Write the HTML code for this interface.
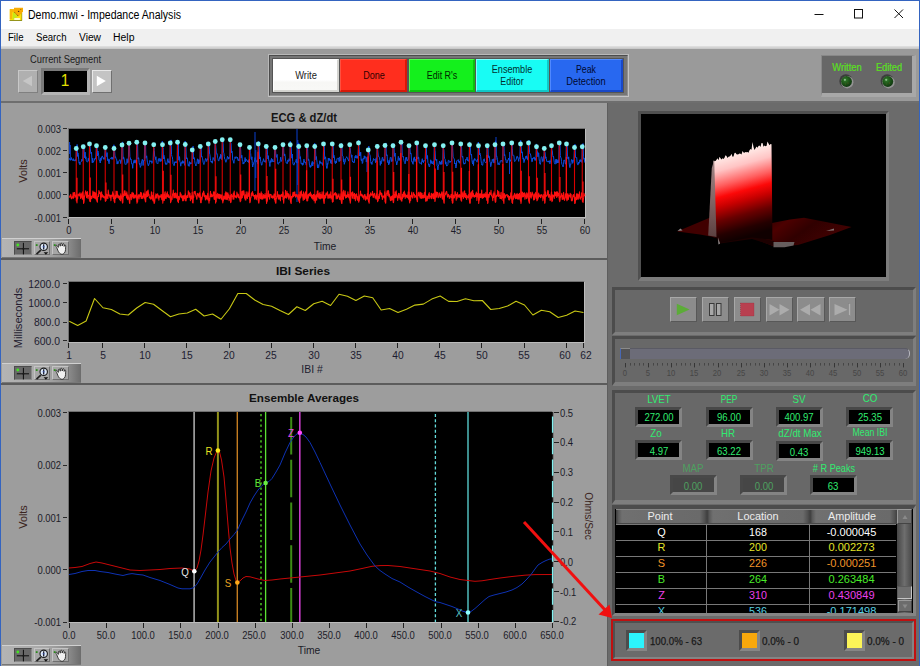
<!DOCTYPE html><html><head><meta charset="utf-8"><style>
*{box-sizing:border-box;margin:0;padding:0}
html,body{width:920px;height:666px;overflow:hidden;background:#9a9a9a;font-family:"Liberation Sans",sans-serif;}
div{position:absolute}
.t{white-space:nowrap}
svg{position:absolute;left:0;top:0}
.btn{font-size:10px;color:#111;text-align:center;}
</style></head><body>
<div class="" style="left:0px;top:0px;width:920px;height:29px;background:#fff"></div>
<div class="" style="left:0px;top:29px;width:920px;height:17px;background:#f0f0f0"></div>
<div class="" style="left:0px;top:46px;width:920px;height:2.5px;background:linear-gradient(180deg,#e2e2e2,#c4c4c4)"></div>
<div class="" style="left:0px;top:48.5px;width:920px;height:52.5px;background:#9a9a9a"></div>
<div class="t" style="left:28px;top:5px;height:20px;line-height:20px;font-size:12px;color:#000;font-weight:normal;transform:scaleX(0.879);transform-origin:left center;">Demo.mwi - Impedance Analysis</div>
<div class="t" style="left:7.5px;top:26.799999999999997px;height:20px;line-height:20px;font-size:11.7px;color:#000;font-weight:normal;transform:scaleX(0.822);transform-origin:left center;">File</div>
<div class="t" style="left:35.5px;top:26.799999999999997px;height:20px;line-height:20px;font-size:11.7px;color:#000;font-weight:normal;transform:scaleX(0.823);transform-origin:left center;">Search</div>
<div class="t" style="left:78.5px;top:26.799999999999997px;height:20px;line-height:20px;font-size:11.7px;color:#000;font-weight:normal;transform:scaleX(0.875);transform-origin:left center;">View</div>
<div class="t" style="left:113px;top:26.799999999999997px;height:20px;line-height:20px;font-size:11.7px;color:#000;font-weight:normal;transform:scaleX(0.894);transform-origin:left center;">Help</div>
<svg width="920" height="30"><g stroke="#111" stroke-width="1" fill="none"><path d="M814.5,14.5h9"/><rect x="854.5" y="9.5" width="8" height="8.5"/><path d="M894.5,9.5l8.5,8.5M903,9.5l-8.5,8.5"/></g><rect x="9.8" y="9.2" width="12.2" height="11.3" fill="#ffe208"/><rect x="9.8" y="9.2" width="2.4" height="10" fill="#f8b808"/><path d="M9.5,20h12.5v0.9h-12.5z" fill="#8a8a10"/><path d="M21.4,13v7.5h0.8v-7.5z" fill="#a0a018"/><path d="M13,11.5l5,5 -5.5,3.5z" fill="#c8e818"/><rect x="14.3" y="18.2" width="5.6" height="1.6" fill="#fffff0"/><path d="M14,7.8h9v4l-4.6,4.6 -4.4,-4.4z" fill="#f8ac04"/><path d="M10,9.2h4v3h-4z" fill="#f8b808"/><path d="M14.6,12.4l3.4,3.4" stroke="#70380c" stroke-width="1" stroke-dasharray="1,0.9"/><circle cx="18.6" cy="11.4" r="0.7" fill="#5a3010"/><circle cx="20.8" cy="9.6" r="0.5" fill="#805018"/></svg>
<div class="t" style="left:30px;top:48.6px;height:20px;line-height:20px;font-size:11px;color:#1a1a1a;font-weight:normal;transform:scaleX(0.848);transform-origin:left center;">Current Segment</div>
<div class="" style="left:18px;top:70px;width:20px;height:23px;background:#b0b0b0;border:1px solid;border-color:#c8c8c8 #808080 #808080 #c8c8c8"></div>
<div class="" style="left:92px;top:70px;width:20px;height:23px;background:#c4c4c4;border:1px solid;border-color:#e8e8e8 #707070 #707070 #e8e8e8"></div>
<div class="" style="left:41px;top:68px;width:49px;height:27px;background:#000;border:3px solid;border-color:#7a7a7a #b4b4b4 #b4b4b4 #7a7a7a"></div>
<div class="t" style="left:-85.5px;top:71.3px;width:300px;height:20px;line-height:20px;text-align:center;font-size:17px;color:#e6e000;font-weight:normal;transform:scaleX(0.900);transform-origin:center center;">1</div>
<svg width="920" height="110"><path d="M22.8,81l9.2,-5.2v10.4z" fill="#c6c6c6"/><path d="M105.8,81l-9,-5.2v10.4z" fill="#fff"/></svg>
<div class="" style="left:267.5px;top:54px;width:361px;height:43px;background:#767676;border:1px solid;border-color:#b8b8b8 #c4c4c4 #c4c4c4 #b8b8b8"></div>
<div class="" style="left:268.5px;top:55px;width:359px;height:41px;border:1px solid;border-color:#4c4c4c #909090 #909090 #4c4c4c"></div>
<div class="" style="left:272px;top:58px;width:352px;height:34.5px;background:#555"></div>
<div class="" style="left:272.8px;top:58.8px;width:66px;height:32.8px;background:linear-gradient(180deg,#fff 0,#fff 66%,#f7f7f5 74%,#f8f8f6 100%);border:solid;border-width:1px 2px 2px 1px;border-color:#ffffff #d4d4d0 #d4d4d0 #ffffff;"></div>
<div class="t" style="left:156.3px;top:65.6px;width:300px;height:20px;line-height:20px;text-align:center;font-size:10px;color:#222;font-weight:normal;transform:scaleX(0.937);transform-origin:center center;">Write</div>
<div class="" style="left:340.3px;top:58.8px;width:66.5px;height:32.8px;background:#ff2e1e;border:solid;border-width:1px 2px 2px 1px;border-color:#ff5040 #d81808 #d81808 #ff5040;"></div>
<div class="t" style="left:224.05px;top:65.6px;width:300px;height:20px;line-height:20px;text-align:center;font-size:10px;color:#300000;font-weight:normal;transform:scaleX(0.908);transform-origin:center center;">Done</div>
<div class="" style="left:408.5px;top:58.8px;width:66px;height:32.8px;background:#14f01c;border:solid;border-width:1px 2px 2px 1px;border-color:#50ff50 #0cc010 #0cc010 #50ff50;"></div>
<div class="t" style="left:292.0px;top:65.6px;width:300px;height:20px;line-height:20px;text-align:center;font-size:10px;color:#002800;font-weight:normal;transform:scaleX(0.893);transform-origin:center center;">Edit R's</div>
<div class="" style="left:476px;top:58.8px;width:72.5px;height:32.8px;background:#18fcf4;border:solid;border-width:1px 2px 2px 1px;border-color:#80ffff #10c8c8 #10c8c8 #80ffff;"></div>
<div class="t" style="left:362.25px;top:59.8px;width:300px;height:20px;line-height:20px;text-align:center;font-size:10px;color:#003030;font-weight:normal;transform:scaleX(0.911);transform-origin:center center;">Ensemble</div>
<div class="t" style="left:362.25px;top:71.8px;width:300px;height:20px;line-height:20px;text-align:center;font-size:10px;color:#003030;font-weight:normal;transform:scaleX(0.890);transform-origin:center center;">Editor</div>
<div class="" style="left:550px;top:58.8px;width:72.5px;height:32.8px;background:#2868f0;border:solid;border-width:1px 2px 2px 1px;border-color:#5088ff #1848c8 #1848c8 #5088ff;"></div>
<div class="t" style="left:436.25px;top:59.8px;width:300px;height:20px;line-height:20px;text-align:center;font-size:10px;color:#000830;font-weight:normal;transform:scaleX(0.877);transform-origin:center center;">Peak</div>
<div class="t" style="left:436.25px;top:71.8px;width:300px;height:20px;line-height:20px;text-align:center;font-size:10px;color:#000830;font-weight:normal;transform:scaleX(0.929);transform-origin:center center;">Detection</div>
<div class="" style="left:820.6px;top:54.6px;width:95.4px;height:42.4px;background:#676767;border:solid;border-width:1.3px 4.2px 4px 1.3px;border-color:#888 #a8a8a8 #a8a8a8 #888"></div>
<div class="t" style="left:696.8px;top:57.900000000000006px;width:300px;height:20px;line-height:20px;text-align:center;font-size:10px;color:#5ae020;font-weight:normal;-webkit-text-stroke:0.2px #5ae020;transform:scaleX(0.937);transform-origin:center center;">Written</div>
<div class="t" style="left:739px;top:57.900000000000006px;width:300px;height:20px;line-height:20px;text-align:center;font-size:10px;color:#5ae020;font-weight:normal;-webkit-text-stroke:0.2px #5ae020;transform:scaleX(0.917);transform-origin:center center;">Edited</div>
<svg width="920" height="110"><defs><radialGradient id="led" cx="38%" cy="35%" r="70%"><stop offset="0" stop-color="#347c2c"/><stop offset="0.55" stop-color="#1c5418"/><stop offset="1" stop-color="#103410"/></radialGradient></defs><circle cx="845.9" cy="80.9" r="6.6" fill="#3c3c3c"/><circle cx="847.2" cy="82.2" r="6.2" fill="#949494"/><circle cx="846.5" cy="81.5" r="5.4" fill="url(#led)"/><circle cx="844.9" cy="79.8" r="1.1" fill="#98c898" opacity="0.85"/><circle cx="848.0" cy="83" r="0.5" fill="#8c5020" opacity="0.8"/><circle cx="845.5" cy="84" r="0.45" fill="#8c7020" opacity="0.7"/><circle cx="887.1999999999999" cy="80.9" r="6.6" fill="#3c3c3c"/><circle cx="888.5" cy="82.2" r="6.2" fill="#949494"/><circle cx="887.8" cy="81.5" r="5.4" fill="url(#led)"/><circle cx="886.1999999999999" cy="79.8" r="1.1" fill="#98c898" opacity="0.85"/><circle cx="889.3" cy="83" r="0.5" fill="#8c5020" opacity="0.8"/><circle cx="886.8" cy="84" r="0.45" fill="#8c7020" opacity="0.7"/></svg>
<div class="" style="left:0px;top:101px;width:920px;height:2px;background:#6e6e6e"></div>
<div class="" style="left:1px;top:103px;width:606px;height:563px;background:#9d9d9d"></div>
<div class="" style="left:607px;top:103px;width:1.5px;height:563px;background:#5e5e5e"></div>
<div class="" style="left:608px;top:103px;width:312px;height:563px;background:#6b6b6b"></div>
<div class="" style="left:1px;top:258.2px;width:606px;height:1.5px;background:#5c5c5c"></div>
<div class="" style="left:1px;top:383.1px;width:606px;height:1.5px;background:#5c5c5c"></div>
<div class="" style="left:2px;top:238px;width:79px;height:20px;background:linear-gradient(90deg,#b4b4b4 0,#a8a8a8 55%,#8a8a8a 85%,#6c6c6c 100%);border-top:1px solid #d0d0d0;border-bottom:1px solid #787878"></div>
<div class="" style="left:14px;top:241.3px;width:18px;height:14px;background:#686868;border:1px solid;border-color:#4c4c4c #8a8a8a #8a8a8a #4c4c4c"></div>
<div class="" style="left:34px;top:241.3px;width:16px;height:14px;background:#a6a6a6;border:1px solid;border-color:#c4c4c4 #707070 #707070 #c4c4c4"></div>
<div class="" style="left:51.7px;top:241.3px;width:17px;height:14px;background:#a6a6a6;border:1px solid;border-color:#c4c4c4 #707070 #707070 #c4c4c4"></div>
<svg width="100" height="20" style="left:0;top:238px"><g fill="none"><path d="M23.4,4.8v11.6M16.8,10.8h12.2" stroke="#0c0c0c" stroke-width="1"/><circle cx="23.4" cy="10.8" r="1" fill="#1a1a1a"/><circle cx="17.8" cy="7" r="1.4" fill="#44e424"/><circle cx="43.7" cy="8.8" r="3.7" stroke="#1a1a1a" stroke-width="1.1" fill="#dce8f8"/><path d="M43.7,6.2v5.2" stroke="#101018" stroke-width="1.2"/><path d="M42.5,8.8h2.4" stroke="#4060c0" stroke-width="0.8"/><path d="M40.8,12.2l-4.3,4" stroke="#222" stroke-width="1.7"/><path d="M43.6,14.3h4.6l-2.3,2.5z" fill="#111"/><rect x="35.8" y="6.2" width="1.8" height="1.8" fill="#2c8c1c"/><path d="M57.3,11c-0.8,-2.4 -2,-3 -1.4,-3.6 c0.8,-0.5 1.6,0.6 2.4,2 c-0.2,-4.2 1.6,-4.6 1.9,-1.2 c0,-4 2,-4 2,-0.2 c0.4,-3.4 2.2,-3 1.9,0.4 c0.7,-2.4 1.9,-1.6 1.5,0.8 c0.2,3.6 -0.6,6 -2.6,7 c-2.6,0.5 -4.4,-1.4 -5.7,-5.2z" fill="#f0f0f0" stroke="#141414" stroke-width="0.8"/><rect x="53.8" y="6.2" width="1.8" height="1.8" fill="#2c8c1c"/></g></svg>
<div class="" style="left:2px;top:363px;width:79px;height:20px;background:linear-gradient(90deg,#b4b4b4 0,#a8a8a8 55%,#8a8a8a 85%,#6c6c6c 100%);border-top:1px solid #d0d0d0;border-bottom:1px solid #787878"></div>
<div class="" style="left:14px;top:366.3px;width:18px;height:14px;background:#686868;border:1px solid;border-color:#4c4c4c #8a8a8a #8a8a8a #4c4c4c"></div>
<div class="" style="left:34px;top:366.3px;width:16px;height:14px;background:#a6a6a6;border:1px solid;border-color:#c4c4c4 #707070 #707070 #c4c4c4"></div>
<div class="" style="left:51.7px;top:366.3px;width:17px;height:14px;background:#a6a6a6;border:1px solid;border-color:#c4c4c4 #707070 #707070 #c4c4c4"></div>
<svg width="100" height="20" style="left:0;top:363px"><g fill="none"><path d="M23.4,4.8v11.6M16.8,10.8h12.2" stroke="#0c0c0c" stroke-width="1"/><circle cx="23.4" cy="10.8" r="1" fill="#1a1a1a"/><circle cx="17.8" cy="7" r="1.4" fill="#44e424"/><circle cx="43.7" cy="8.8" r="3.7" stroke="#1a1a1a" stroke-width="1.1" fill="#dce8f8"/><path d="M43.7,6.2v5.2" stroke="#101018" stroke-width="1.2"/><path d="M42.5,8.8h2.4" stroke="#4060c0" stroke-width="0.8"/><path d="M40.8,12.2l-4.3,4" stroke="#222" stroke-width="1.7"/><path d="M43.6,14.3h4.6l-2.3,2.5z" fill="#111"/><rect x="35.8" y="6.2" width="1.8" height="1.8" fill="#2c8c1c"/><path d="M57.3,11c-0.8,-2.4 -2,-3 -1.4,-3.6 c0.8,-0.5 1.6,0.6 2.4,2 c-0.2,-4.2 1.6,-4.6 1.9,-1.2 c0,-4 2,-4 2,-0.2 c0.4,-3.4 2.2,-3 1.9,0.4 c0.7,-2.4 1.9,-1.6 1.5,0.8 c0.2,3.6 -0.6,6 -2.6,7 c-2.6,0.5 -4.4,-1.4 -5.7,-5.2z" fill="#f0f0f0" stroke="#141414" stroke-width="0.8"/><rect x="53.8" y="6.2" width="1.8" height="1.8" fill="#2c8c1c"/></g></svg>
<div class="" style="left:2px;top:644.6px;width:79px;height:20px;background:linear-gradient(90deg,#b4b4b4 0,#a8a8a8 55%,#8a8a8a 85%,#6c6c6c 100%);border-top:1px solid #d0d0d0;border-bottom:1px solid #787878"></div>
<div class="" style="left:14px;top:647.9px;width:18px;height:14px;background:#686868;border:1px solid;border-color:#4c4c4c #8a8a8a #8a8a8a #4c4c4c"></div>
<div class="" style="left:34px;top:647.9px;width:16px;height:14px;background:#a6a6a6;border:1px solid;border-color:#c4c4c4 #707070 #707070 #c4c4c4"></div>
<div class="" style="left:51.7px;top:647.9px;width:17px;height:14px;background:#a6a6a6;border:1px solid;border-color:#c4c4c4 #707070 #707070 #c4c4c4"></div>
<svg width="100" height="20" style="left:0;top:644.6px"><g fill="none"><path d="M23.4,4.8v11.6M16.8,10.8h12.2" stroke="#0c0c0c" stroke-width="1"/><circle cx="23.4" cy="10.8" r="1" fill="#1a1a1a"/><circle cx="17.8" cy="7" r="1.4" fill="#44e424"/><circle cx="43.7" cy="8.8" r="3.7" stroke="#1a1a1a" stroke-width="1.1" fill="#dce8f8"/><path d="M43.7,6.2v5.2" stroke="#101018" stroke-width="1.2"/><path d="M42.5,8.8h2.4" stroke="#4060c0" stroke-width="0.8"/><path d="M40.8,12.2l-4.3,4" stroke="#222" stroke-width="1.7"/><path d="M43.6,14.3h4.6l-2.3,2.5z" fill="#111"/><rect x="35.8" y="6.2" width="1.8" height="1.8" fill="#2c8c1c"/><path d="M57.3,11c-0.8,-2.4 -2,-3 -1.4,-3.6 c0.8,-0.5 1.6,0.6 2.4,2 c-0.2,-4.2 1.6,-4.6 1.9,-1.2 c0,-4 2,-4 2,-0.2 c0.4,-3.4 2.2,-3 1.9,0.4 c0.7,-2.4 1.9,-1.6 1.5,0.8 c0.2,3.6 -0.6,6 -2.6,7 c-2.6,0.5 -4.4,-1.4 -5.7,-5.2z" fill="#f0f0f0" stroke="#141414" stroke-width="0.8"/><rect x="53.8" y="6.2" width="1.8" height="1.8" fill="#2c8c1c"/></g></svg>
<div class="t" style="left:153.5px;top:108px;width:300px;height:20px;line-height:20px;text-align:center;font-size:13px;color:#151515;font-weight:bold;transform:scaleX(0.862);transform-origin:center center;">ECG &amp; dZ/dt</div>
<div class="" style="left:68px;top:128px;width:518px;height:90px;background:#000;border:1px solid;border-color:#707070 #bcbcbc #bcbcbc #707070"></div>
<div class="t" style="left:-239.5px;top:119px;width:300px;height:20px;line-height:20px;text-align:right;font-size:11.5px;color:#1c1c28;font-weight:normal;transform:scaleX(0.820);transform-origin:right center;">0.003</div>
<div class="" style="left:63px;top:128px;width:4px;height:1px;background:#2a2a2a"></div>
<div class="t" style="left:-239.5px;top:141px;width:300px;height:20px;line-height:20px;text-align:right;font-size:11.5px;color:#1c1c28;font-weight:normal;transform:scaleX(0.820);transform-origin:right center;">0.002</div>
<div class="" style="left:63px;top:150px;width:4px;height:1px;background:#2a2a2a"></div>
<div class="t" style="left:-239.5px;top:163px;width:300px;height:20px;line-height:20px;text-align:right;font-size:11.5px;color:#1c1c28;font-weight:normal;transform:scaleX(0.820);transform-origin:right center;">0.001</div>
<div class="" style="left:63px;top:172px;width:4px;height:1px;background:#2a2a2a"></div>
<div class="t" style="left:-239.5px;top:185px;width:300px;height:20px;line-height:20px;text-align:right;font-size:11.5px;color:#1c1c28;font-weight:normal;transform:scaleX(0.820);transform-origin:right center;">0.000</div>
<div class="" style="left:63px;top:194px;width:4px;height:1px;background:#2a2a2a"></div>
<div class="t" style="left:-239.5px;top:207.5px;width:300px;height:20px;line-height:20px;text-align:right;font-size:11.5px;color:#1c1c28;font-weight:normal;transform:scaleX(0.820);transform-origin:right center;">-0.001</div>
<div class="" style="left:63px;top:217px;width:4px;height:1px;background:#2a2a2a"></div>
<div class="" style="left:68px;top:219px;width:1px;height:5px;background:#222"></div>
<div class="t" style="left:-81.2px;top:220.4px;width:300px;height:20px;line-height:20px;text-align:center;font-size:11.5px;color:#1c1c28;font-weight:normal;transform:scaleX(0.820);transform-origin:center center;">0</div>
<div class="" style="left:111px;top:219px;width:1px;height:5px;background:#222"></div>
<div class="t" style="left:-38.2px;top:220.4px;width:300px;height:20px;line-height:20px;text-align:center;font-size:11.5px;color:#1c1c28;font-weight:normal;transform:scaleX(0.820);transform-origin:center center;">5</div>
<div class="" style="left:154px;top:219px;width:1px;height:5px;background:#222"></div>
<div class="t" style="left:4.800000000000011px;top:220.4px;width:300px;height:20px;line-height:20px;text-align:center;font-size:11.5px;color:#1c1c28;font-weight:normal;transform:scaleX(0.820);transform-origin:center center;">10</div>
<div class="" style="left:197px;top:219px;width:1px;height:5px;background:#222"></div>
<div class="t" style="left:47.80000000000001px;top:220.4px;width:300px;height:20px;line-height:20px;text-align:center;font-size:11.5px;color:#1c1c28;font-weight:normal;transform:scaleX(0.820);transform-origin:center center;">15</div>
<div class="" style="left:240px;top:219px;width:1px;height:5px;background:#222"></div>
<div class="t" style="left:90.80000000000001px;top:220.4px;width:300px;height:20px;line-height:20px;text-align:center;font-size:11.5px;color:#1c1c28;font-weight:normal;transform:scaleX(0.820);transform-origin:center center;">20</div>
<div class="" style="left:283px;top:219px;width:1px;height:5px;background:#222"></div>
<div class="t" style="left:133.8px;top:220.4px;width:300px;height:20px;line-height:20px;text-align:center;font-size:11.5px;color:#1c1c28;font-weight:normal;transform:scaleX(0.820);transform-origin:center center;">25</div>
<div class="" style="left:326px;top:219px;width:1px;height:5px;background:#222"></div>
<div class="t" style="left:176.8px;top:220.4px;width:300px;height:20px;line-height:20px;text-align:center;font-size:11.5px;color:#1c1c28;font-weight:normal;transform:scaleX(0.820);transform-origin:center center;">30</div>
<div class="" style="left:369px;top:219px;width:1px;height:5px;background:#222"></div>
<div class="t" style="left:219.8px;top:220.4px;width:300px;height:20px;line-height:20px;text-align:center;font-size:11.5px;color:#1c1c28;font-weight:normal;transform:scaleX(0.820);transform-origin:center center;">35</div>
<div class="" style="left:412px;top:219px;width:1px;height:5px;background:#222"></div>
<div class="t" style="left:262.8px;top:220.4px;width:300px;height:20px;line-height:20px;text-align:center;font-size:11.5px;color:#1c1c28;font-weight:normal;transform:scaleX(0.820);transform-origin:center center;">40</div>
<div class="" style="left:455px;top:219px;width:1px;height:5px;background:#222"></div>
<div class="t" style="left:305.8px;top:220.4px;width:300px;height:20px;line-height:20px;text-align:center;font-size:11.5px;color:#1c1c28;font-weight:normal;transform:scaleX(0.820);transform-origin:center center;">45</div>
<div class="" style="left:498px;top:219px;width:1px;height:5px;background:#222"></div>
<div class="t" style="left:348.8px;top:220.4px;width:300px;height:20px;line-height:20px;text-align:center;font-size:11.5px;color:#1c1c28;font-weight:normal;transform:scaleX(0.820);transform-origin:center center;">50</div>
<div class="" style="left:541px;top:219px;width:1px;height:5px;background:#222"></div>
<div class="t" style="left:391.79999999999995px;top:220.4px;width:300px;height:20px;line-height:20px;text-align:center;font-size:11.5px;color:#1c1c28;font-weight:normal;transform:scaleX(0.820);transform-origin:center center;">55</div>
<div class="" style="left:584px;top:219px;width:1px;height:5px;background:#222"></div>
<div class="t" style="left:434.79999999999995px;top:220.4px;width:300px;height:20px;line-height:20px;text-align:center;font-size:11.5px;color:#1c1c28;font-weight:normal;transform:scaleX(0.820);transform-origin:center center;">60</div>
<div class="t" style="left:174.75px;top:235.6px;width:300px;height:20px;line-height:20px;text-align:center;font-size:11.5px;color:#1c1c28;font-weight:normal;transform:scaleX(0.895);transform-origin:center center;">Time</div>
<div class="t" style="left:-127.5px;top:161.4px;width:300px;height:20px;line-height:20px;text-align:center;font-size:11.5px;color:#3a2420;font-weight:normal;transform:rotate(-90deg) scaleX(0.943);transform-origin:center center;">Volts</div>
<svg width="920" height="260"><g fill="none" stroke-linejoin="round"><path d="M69.5,158.1 L69.9,160.1 L70.3,158.4 L70.7,160.3 L71.1,159.7 L71.5,157.6 L71.9,159.9 L72.3,159.8 L72.7,159.7 L73.1,160.9 L73.5,158.7 L73.9,159.7 L74.3,161.0 L74.7,160.9 L75.1,160.1 L75.5,159.5 L75.9,161.1 L76.3,151.6 L76.7,153.6 L77.1,144.5 L77.5,156.4 L77.9,152.9 L78.3,154.8 L78.7,159.8 L79.1,163.3 L79.5,162.0 L79.9,164.8 L80.3,162.6 L80.7,162.2 L81.1,161.4 L81.5,161.5 L81.9,159.2 L82.3,160.9 L82.7,160.6 L83.1,146.0 L83.5,152.3 L83.9,144.8 L84.3,154.9 L84.7,157.9 L85.1,152.1 L85.5,159.0 L85.9,156.7 L86.3,160.9 L86.7,161.6 L87.1,161.6 L87.5,161.9 L87.9,161.8 L88.3,158.2 L88.7,161.0 L89.1,160.1 L89.5,146.2 L89.9,145.3 L90.3,148.2 L90.7,152.9 L91.1,153.8 L91.5,152.2 L91.9,159.2 L92.3,162.9 L92.7,158.2 L93.1,162.4 L93.5,162.1 L93.9,160.8 L94.3,160.5 L94.7,158.7 L95.1,158.1 L95.5,159.2 L95.9,156.0 L96.3,147.6 L96.7,148.4 L97.1,147.3 L97.5,156.0 L97.9,151.0 L98.3,152.5 L98.7,155.8 L99.1,160.2 L99.5,160.0 L99.9,161.8 L100.3,163.0 L100.7,157.9 L101.1,160.5 L101.5,157.0 L101.9,156.6 L102.3,155.9 L102.7,157.3 L103.1,158.0 L103.5,159.2 L103.9,157.5 L104.3,159.4 L104.7,159.0 L105.1,149.7 L105.5,146.0 L105.9,152.0 L106.3,155.6 L106.7,156.6 L107.1,152.6 L107.5,160.6 L107.9,158.7 L108.3,159.1 L108.7,162.6 L109.1,163.8 L109.5,159.5 L109.9,159.2 L110.3,158.5 L110.7,158.6 L111.1,157.6 L111.5,157.3 L111.9,159.3 L112.3,157.3 L112.7,159.1 L113.1,159.3 L113.5,157.8 L113.9,144.8 L114.3,151.1 L114.7,151.6 L115.1,157.6 L115.5,156.7 L115.9,157.9 L116.3,159.6 L116.7,159.3 L117.1,164.1 L117.5,161.6 L117.9,163.8 L118.3,162.0 L118.7,161.5 L119.1,160.5 L119.5,160.4 L119.9,159.6 L120.3,160.1 L120.7,163.6 L121.1,162.1 L121.5,161.4 L121.9,147.6 L122.3,146.7 L122.7,141.9 L123.1,159.2 L123.5,156.9 L123.9,157.9 L124.3,160.1 L124.7,161.9 L125.1,164.4 L125.5,164.3 L125.9,164.4 L126.3,164.3 L126.7,163.8 L127.1,158.7 L127.5,162.6 L127.9,162.9 L128.3,162.0 L128.7,146.2 L129.1,142.8 L129.5,145.5 L129.9,156.5 L130.3,157.5 L130.7,159.8 L131.1,159.1 L131.5,162.9 L131.9,164.1 L132.3,164.1 L132.7,168.3 L133.1,162.9 L133.5,163.0 L133.9,160.3 L134.3,160.3 L134.7,163.1 L135.1,159.8 L135.5,162.4 L135.9,160.9 L136.3,163.5 L136.7,147.4 L137.1,145.2 L137.5,142.2 L137.9,159.2 L138.3,157.9 L138.7,157.7 L139.1,162.7 L139.5,164.5 L139.9,163.3 L140.3,167.4 L140.7,166.3 L141.1,165.9 L141.5,161.3 L141.9,160.7 L142.3,159.3 L142.7,161.1 L143.1,165.5 L143.5,161.0 L143.9,160.3 L144.3,161.0 L144.7,142.1 L145.1,145.7 L145.5,141.4 L145.9,158.3 L146.3,157.5 L146.7,155.8 L147.1,160.0 L147.5,162.8 L147.9,164.0 L148.3,165.8 L148.7,165.0 L149.1,163.9 L149.5,162.7 L149.9,160.4 L150.3,161.6 L150.7,161.4 L151.1,160.8 L151.5,161.0 L151.9,163.4 L152.3,162.5 L152.7,162.1 L153.1,160.5 L153.5,150.7 L153.9,147.9 L154.3,150.6 L154.7,156.7 L155.1,157.2 L155.5,159.6 L155.9,156.7 L156.3,162.5 L156.7,162.9 L157.1,163.4 L157.5,164.0 L157.9,163.5 L158.3,159.4 L158.7,160.5 L159.1,158.2 L159.5,160.8 L159.9,161.5 L160.3,161.6 L160.7,158.7 L161.1,161.3 L161.5,160.5 L161.9,159.0 L162.3,141.2 L162.7,148.9 L163.1,147.8 L163.5,158.9 L163.9,155.2 L164.3,156.8 L164.7,159.7 L165.1,161.6 L165.5,164.2 L165.9,164.3 L166.3,163.5 L166.7,164.5 L167.1,163.0 L167.5,159.9 L167.9,158.6 L168.3,160.9 L168.7,162.6 L169.1,161.1 L169.5,163.2 L169.9,161.2 L170.3,143.4 L170.7,141.0 L171.1,139.9 L171.5,154.4 L171.9,156.3 L172.3,157.0 L172.7,159.7 L173.1,163.9 L173.5,164.3 L173.9,165.6 L174.3,165.5 L174.7,161.9 L175.1,161.7 L175.5,162.8 L175.9,161.6 L176.3,162.6 L176.7,162.7 L177.1,160.7 L177.5,142.2 L177.9,147.1 L178.3,143.7 L178.7,160.0 L179.1,160.4 L179.5,156.6 L179.9,161.8 L180.3,162.6 L180.7,166.2 L181.1,164.5 L181.5,163.3 L181.9,161.7 L182.3,163.4 L182.7,160.6 L183.1,163.0 L183.5,163.0 L183.9,161.3 L184.3,163.7 L184.7,165.4 L185.1,141.1 L185.5,142.9 L185.9,146.4 L186.3,159.0 L186.7,157.5 L187.1,157.8 L187.5,160.0 L187.9,163.0 L188.3,165.9 L188.7,164.4 L189.1,166.4 L189.5,161.6 L189.9,162.9 L190.3,164.2 L190.7,162.5 L191.1,162.8 L191.5,163.6 L191.9,162.2 L192.3,150.5 L192.7,154.4 L193.1,146.2 L193.5,158.9 L193.9,157.6 L194.3,157.7 L194.7,160.7 L195.1,163.9 L195.5,164.1 L195.9,166.0 L196.3,164.5 L196.7,163.4 L197.1,161.5 L197.5,158.8 L197.9,161.0 L198.3,164.0 L198.7,159.6 L199.1,163.4 L199.5,160.1 L199.9,161.6 L200.3,151.4 L200.7,148.4 L201.1,146.1 L201.5,157.0 L201.9,156.3 L202.3,158.1 L202.7,158.9 L203.1,162.2 L203.5,163.1 L203.9,164.5 L204.3,163.3 L204.7,162.3 L205.1,160.5 L205.5,158.5 L205.9,159.3 L206.3,160.6 L206.7,161.5 L207.1,158.5 L207.5,158.9 L207.9,160.2 L208.3,146.8 L208.7,143.0 L209.1,145.1 L209.5,153.0 L209.9,154.8 L210.3,158.1 L210.7,160.7 L211.1,162.1 L211.5,161.0 L211.9,162.8 L212.3,163.2 L212.7,160.7 L213.1,157.5 L213.5,158.3 L213.9,159.5 L214.3,160.1 L214.7,161.2 L215.1,143.3 L215.5,143.3 L215.9,147.4 L216.3,153.3 L216.7,154.2 L217.1,153.7 L217.5,157.7 L217.9,158.5 L218.3,160.5 L218.7,161.1 L219.1,159.8 L219.5,159.2 L219.9,156.7 L220.3,158.3 L220.7,154.2 L221.1,158.6 L221.5,155.0 L221.9,159.8 L222.3,142.1 L222.7,139.0 L223.1,143.2 L223.5,152.2 L223.9,153.3 L224.3,156.5 L224.7,159.0 L225.1,159.5 L225.5,161.3 L225.9,162.3 L226.3,161.0 L226.7,160.2 L227.1,158.4 L227.5,156.3 L227.9,157.0 L228.3,159.2 L228.7,157.4 L229.1,158.7 L229.5,157.4 L229.9,157.0 L230.3,139.1 L230.7,142.9 L231.1,143.4 L231.5,152.8 L231.9,151.0 L232.3,152.9 L232.7,160.1 L233.1,160.3 L233.5,161.9 L233.9,163.3 L234.3,159.4 L234.7,158.6 L235.1,156.8 L235.5,158.4 L235.9,157.7 L236.3,156.7 L236.7,157.1 L237.1,158.4 L237.5,157.1 L237.9,160.1 L238.3,160.9 L238.7,160.1 L239.1,158.7 L239.5,161.0 L239.9,144.2 L240.3,144.0 L240.7,149.8 L241.1,158.1 L241.5,155.6 L241.9,155.1 L242.3,160.6 L242.7,160.2 L243.1,164.1 L243.5,162.5 L243.9,163.5 L244.3,162.8 L244.7,161.6 L245.1,157.5 L245.5,162.0 L245.9,159.0 L246.3,160.2 L246.7,160.0 L247.1,160.7 L247.5,161.8 L247.9,160.8 L248.3,160.3 L248.7,162.7 L249.1,161.8 L249.5,148.0 L249.9,145.6 L250.3,152.3 L250.7,153.7 L251.1,159.1 L251.5,159.6 L251.9,156.8 L252.3,163.4 L252.7,167.0 L253.1,164.1 L253.5,164.3 L253.9,162.1 L254.3,161.9 L254.7,159.2 L255.1,157.5 L255.5,160.0 L255.9,159.7 L256.3,162.0 L256.7,161.8 L257.1,160.3 L257.5,160.1 L257.9,164.1 L258.3,148.8 L258.7,141.4 L259.1,144.3 L259.5,159.0 L259.9,157.4 L260.3,156.9 L260.7,161.5 L261.1,163.2 L261.5,165.1 L261.9,165.2 L262.3,161.9 L262.7,161.4 L263.1,161.5 L263.5,158.7 L263.9,160.6 L264.3,161.8 L264.7,161.9 L265.1,160.5 L265.5,162.3 L265.9,162.2 L266.3,145.7 L266.7,146.4 L267.1,146.4 L267.5,154.2 L267.9,159.0 L268.3,155.7 L268.7,160.0 L269.1,161.4 L269.5,163.4 L269.9,166.5 L270.3,160.7 L270.7,162.5 L271.1,159.9 L271.5,158.3 L271.9,162.1 L272.3,161.2 L272.7,159.4 L273.1,161.9 L273.5,161.3 L273.9,161.7 L274.3,162.0 L274.7,148.8 L275.1,149.6 L275.5,149.8 L275.9,155.2 L276.3,157.4 L276.7,156.1 L277.1,154.4 L277.5,161.3 L277.9,164.0 L278.3,164.3 L278.7,163.4 L279.1,162.2 L279.5,162.7 L279.9,162.3 L280.3,160.2 L280.7,157.1 L281.1,160.5 L281.5,161.4 L281.9,159.8 L282.3,159.4 L282.7,148.8 L283.1,146.0 L283.5,144.7 L283.9,154.3 L284.3,155.9 L284.7,153.9 L285.1,155.5 L285.5,160.1 L285.9,161.5 L286.3,163.2 L286.7,162.9 L287.1,163.7 L287.5,163.4 L287.9,159.9 L288.3,161.6 L288.7,160.5 L289.1,158.7 L289.5,159.1 L289.9,161.1 L290.3,141.2 L290.7,147.9 L291.1,143.7 L291.5,154.1 L291.9,158.2 L292.3,154.0 L292.7,161.5 L293.1,164.5 L293.5,164.5 L293.9,165.2 L294.3,164.2 L294.7,162.9 L295.1,161.9 L295.5,161.6 L295.9,160.5 L296.3,159.1 L296.7,163.1 L297.1,162.0 L297.5,162.4 L297.9,161.7 L298.3,162.6 L298.7,142.9 L299.1,149.3 L299.5,150.2 L299.9,158.7 L300.3,156.6 L300.7,159.9 L301.1,163.9 L301.5,163.5 L301.9,164.4 L302.3,162.9 L302.7,165.3 L303.1,164.9 L303.5,162.7 L303.9,159.2 L304.3,160.6 L304.7,162.5 L305.1,163.1 L305.5,162.3 L305.9,163.1 L306.3,165.2 L306.7,144.8 L307.1,150.4 L307.5,144.3 L307.9,157.8 L308.3,160.5 L308.7,159.3 L309.1,161.1 L309.5,165.7 L309.9,166.9 L310.3,167.5 L310.7,165.4 L311.1,166.6 L311.5,164.0 L311.9,162.7 L312.3,161.4 L312.7,166.0 L313.1,163.7 L313.5,162.6 L313.9,163.5 L314.3,163.6 L314.7,143.2 L315.1,148.5 L315.5,148.1 L315.9,159.9 L316.3,156.5 L316.7,159.7 L317.1,162.5 L317.5,168.0 L317.9,164.9 L318.3,167.8 L318.7,167.7 L319.1,163.9 L319.5,163.7 L319.9,160.7 L320.3,163.2 L320.7,162.1 L321.1,163.5 L321.5,162.9 L321.9,162.5 L322.3,164.5 L322.7,163.6 L323.1,165.8 L323.5,149.8 L323.9,143.9 L324.3,146.4 L324.7,159.3 L325.1,157.6 L325.5,156.8 L325.9,159.6 L326.3,165.6 L326.7,168.3 L327.1,168.4 L327.5,163.5 L327.9,164.2 L328.3,158.1 L328.7,160.4 L329.1,158.1 L329.5,160.4 L329.9,159.0 L330.3,159.5 L330.7,163.2 L331.1,163.1 L331.5,160.3 L331.9,164.0 L332.3,149.4 L332.7,146.6 L333.1,144.5 L333.5,157.8 L333.9,155.2 L334.3,156.4 L334.7,160.9 L335.1,163.2 L335.5,163.7 L335.9,160.9 L336.3,163.0 L336.7,160.6 L337.1,158.7 L337.5,158.2 L337.9,158.3 L338.3,158.0 L338.7,159.8 L339.1,161.7 L339.5,161.1 L339.9,156.9 L340.3,160.5 L340.7,161.0 L341.1,146.4 L341.5,143.4 L341.9,145.4 L342.3,155.9 L342.7,155.8 L343.1,156.4 L343.5,161.8 L343.9,158.9 L344.3,164.3 L344.7,162.2 L345.1,162.2 L345.5,158.6 L345.9,158.3 L346.3,157.9 L346.7,156.7 L347.1,157.5 L347.5,157.9 L347.9,159.0 L348.3,160.0 L348.7,161.1 L349.1,160.0 L349.5,150.6 L349.9,147.7 L350.3,148.9 L350.7,153.5 L351.1,154.4 L351.5,157.4 L351.9,155.0 L352.3,161.0 L352.7,162.1 L353.1,161.5 L353.5,162.0 L353.9,163.0 L354.3,162.5 L354.7,158.6 L355.1,156.3 L355.5,158.0 L355.9,155.2 L356.3,157.6 L356.7,156.6 L357.1,158.5 L357.5,156.4 L357.9,158.0 L358.3,148.7 L358.7,140.3 L359.1,147.3 L359.5,156.0 L359.9,152.6 L360.3,155.6 L360.7,152.2 L361.1,160.1 L361.5,160.9 L361.9,158.8 L362.3,163.5 L362.7,163.0 L363.1,158.8 L363.5,158.2 L363.9,159.3 L364.3,155.8 L364.7,158.3 L365.1,157.6 L365.5,156.7 L365.9,156.8 L366.3,162.0 L366.7,159.8 L367.1,157.3 L367.5,162.3 L367.9,160.3 L368.3,153.9 L368.7,146.0 L369.1,147.1 L369.5,154.4 L369.9,154.5 L370.3,157.1 L370.7,161.6 L371.1,163.4 L371.5,162.3 L371.9,164.5 L372.3,162.4 L372.7,161.2 L373.1,160.9 L373.5,158.5 L373.9,159.2 L374.3,159.7 L374.7,159.9 L375.1,159.3 L375.5,162.7 L375.9,159.1 L376.3,157.7 L376.7,161.9 L377.1,144.1 L377.5,147.8 L377.9,152.0 L378.3,156.1 L378.7,156.8 L379.1,156.7 L379.5,157.6 L379.9,160.3 L380.3,165.4 L380.7,161.2 L381.1,163.9 L381.5,161.2 L381.9,159.7 L382.3,157.5 L382.7,157.1 L383.1,161.3 L383.5,160.6 L383.9,158.9 L384.3,161.2 L384.7,158.6 L385.1,148.8 L385.5,149.0 L385.9,142.9 L386.3,154.0 L386.7,155.7 L387.1,154.8 L387.5,162.2 L387.9,162.7 L388.3,161.9 L388.7,165.0 L389.1,160.2 L389.5,163.4 L389.9,160.2 L390.3,157.3 L390.7,157.8 L391.1,157.4 L391.5,161.4 L391.9,161.7 L392.3,159.3 L392.7,161.2 L393.1,143.5 L393.5,144.9 L393.9,145.6 L394.3,153.4 L394.7,156.4 L395.1,153.0 L395.5,159.9 L395.9,161.1 L396.3,161.9 L396.7,165.0 L397.1,163.0 L397.5,161.1 L397.9,160.4 L398.3,156.4 L398.7,157.5 L399.1,160.5 L399.5,158.3 L399.9,160.2 L400.3,160.2 L400.7,160.3 L401.1,140.8 L401.5,146.0 L401.9,143.9 L402.3,155.7 L402.7,156.5 L403.1,156.0 L403.5,158.3 L403.9,160.3 L404.3,161.7 L404.7,162.3 L405.1,163.8 L405.5,160.9 L405.9,157.4 L406.3,159.3 L406.7,157.2 L407.1,161.1 L407.5,160.0 L407.9,160.0 L408.3,159.0 L408.7,158.1 L409.1,145.9 L409.5,146.8 L409.9,147.5 L410.3,154.1 L410.7,152.9 L411.1,153.6 L411.5,160.9 L411.9,161.9 L412.3,161.6 L412.7,163.7 L413.1,164.3 L413.5,158.6 L413.9,159.3 L414.3,156.9 L414.7,160.4 L415.1,161.6 L415.5,159.3 L415.9,159.9 L416.3,159.9 L416.7,142.6 L417.1,147.4 L417.5,142.3 L417.9,159.1 L418.3,157.2 L418.7,157.2 L419.1,161.9 L419.5,163.2 L419.9,163.4 L420.3,163.1 L420.7,163.5 L421.1,162.6 L421.5,164.4 L421.9,160.4 L422.3,158.7 L422.7,161.9 L423.1,160.5 L423.5,162.7 L423.9,160.7 L424.3,160.9 L424.7,160.3 L425.1,159.7 L425.5,150.4 L425.9,151.4 L426.3,145.0 L426.7,158.3 L427.1,159.2 L427.5,155.5 L427.9,162.7 L428.3,163.4 L428.7,165.3 L429.1,166.5 L429.5,167.0 L429.9,164.0 L430.3,163.7 L430.7,159.8 L431.1,160.8 L431.5,163.3 L431.9,161.2 L432.3,163.9 L432.7,163.0 L433.1,162.2 L433.5,161.3 L433.9,164.8 L434.3,143.4 L434.7,147.1 L435.1,150.7 L435.5,160.0 L435.9,159.8 L436.3,160.7 L436.7,159.3 L437.1,165.6 L437.5,166.0 L437.9,169.9 L438.3,166.3 L438.7,164.8 L439.1,164.0 L439.5,161.0 L439.9,161.9 L440.3,164.4 L440.7,162.3 L441.1,164.3 L441.5,160.7 L441.9,164.3 L442.3,163.4 L442.7,162.7 L443.1,147.6 L443.5,150.1 L443.9,149.6 L444.3,157.0 L444.7,158.7 L445.1,159.2 L445.5,164.1 L445.9,161.8 L446.3,165.0 L446.7,166.0 L447.1,165.8 L447.5,165.6 L447.9,164.4 L448.3,160.4 L448.7,160.1 L449.1,161.0 L449.5,161.5 L449.9,162.6 L450.3,162.1 L450.7,161.1 L451.1,161.6 L451.5,161.1 L451.9,148.1 L452.3,141.4 L452.7,148.9 L453.1,156.9 L453.5,157.6 L453.9,158.4 L454.3,159.1 L454.7,164.0 L455.1,163.0 L455.5,164.5 L455.9,168.0 L456.3,166.6 L456.7,160.9 L457.1,160.4 L457.5,160.4 L457.9,160.2 L458.3,159.6 L458.7,162.3 L459.1,162.2 L459.5,161.0 L459.9,163.4 L460.3,161.8 L460.7,148.5 L461.1,145.0 L461.5,146.2 L461.9,156.7 L462.3,157.3 L462.7,156.1 L463.1,159.0 L463.5,163.4 L463.9,164.3 L464.3,164.0 L464.7,163.0 L465.1,163.6 L465.5,161.3 L465.9,159.0 L466.3,159.6 L466.7,158.9 L467.1,157.1 L467.5,160.6 L467.9,159.6 L468.3,161.0 L468.7,161.4 L469.1,159.3 L469.5,141.9 L469.9,146.0 L470.3,145.3 L470.7,154.1 L471.1,155.2 L471.5,154.1 L471.9,159.5 L472.3,162.6 L472.7,164.0 L473.1,160.7 L473.5,165.5 L473.9,159.7 L474.3,160.4 L474.7,158.4 L475.1,159.8 L475.5,160.0 L475.9,159.7 L476.3,160.6 L476.7,161.6 L477.1,162.2 L477.5,159.2 L477.9,160.2 L478.3,142.0 L478.7,151.0 L479.1,145.0 L479.5,154.8 L479.9,153.1 L480.3,154.3 L480.7,156.8 L481.1,160.9 L481.5,163.6 L481.9,165.0 L482.3,165.1 L482.7,165.3 L483.1,161.7 L483.5,159.4 L483.9,159.2 L484.3,158.8 L484.7,161.7 L485.1,162.4 L485.5,162.5 L485.9,162.0 L486.3,162.6 L486.7,160.2 L487.1,144.3 L487.5,143.8 L487.9,144.3 L488.3,157.7 L488.7,155.6 L489.1,156.0 L489.5,158.0 L489.9,161.9 L490.3,162.5 L490.7,166.7 L491.1,165.6 L491.5,162.0 L491.9,162.4 L492.3,159.3 L492.7,160.7 L493.1,161.4 L493.5,158.8 L493.9,163.1 L494.3,159.3 L494.7,162.6 L495.1,148.8 L495.5,140.8 L495.9,142.6 L496.3,156.5 L496.7,155.9 L497.1,157.7 L497.5,159.7 L497.9,164.6 L498.3,164.1 L498.7,162.8 L499.1,165.0 L499.5,163.8 L499.9,163.2 L500.3,160.7 L500.7,160.9 L501.1,160.9 L501.5,160.7 L501.9,160.2 L502.3,162.4 L502.7,159.9 L503.1,142.2 L503.5,146.4 L503.9,144.7 L504.3,155.7 L504.7,154.4 L505.1,156.3 L505.5,159.9 L505.9,159.5 L506.3,162.6 L506.7,162.0 L507.1,162.7 L507.5,161.3 L507.9,159.8 L508.3,159.9 L508.7,158.0 L509.1,159.2 L509.5,158.8 L509.9,160.9 L510.3,159.8 L510.7,161.4 L511.1,159.4 L511.5,147.6 L511.9,141.1 L512.3,148.2 L512.7,155.5 L513.1,155.0 L513.5,155.1 L513.9,155.8 L514.3,160.3 L514.7,161.6 L515.1,160.6 L515.5,160.0 L515.9,160.3 L516.3,159.1 L516.7,156.8 L517.1,156.1 L517.5,156.3 L517.9,158.5 L518.3,158.8 L518.7,161.4 L519.1,157.6 L519.5,158.3 L519.9,158.4 L520.3,142.2 L520.7,140.4 L521.1,141.9 L521.5,153.1 L521.9,152.0 L522.3,151.8 L522.7,157.5 L523.1,159.2 L523.5,157.8 L523.9,162.6 L524.3,161.7 L524.7,159.0 L525.1,159.4 L525.5,158.5 L525.9,156.1 L526.3,157.6 L526.7,155.8 L527.1,159.1 L527.5,157.7 L527.9,160.2 L528.3,144.6 L528.7,146.1 L529.1,140.2 L529.5,152.4 L529.9,153.9 L530.3,153.8 L530.7,155.0 L531.1,157.8 L531.5,159.2 L531.9,161.9 L532.3,161.6 L532.7,158.0 L533.1,158.9 L533.5,158.2 L533.9,157.1 L534.3,157.1 L534.7,159.7 L535.1,160.5 L535.5,158.4 L535.9,160.2 L536.3,143.9 L536.7,145.2 L537.1,150.8 L537.5,151.5 L537.9,156.8 L538.3,152.7 L538.7,153.1 L539.1,158.9 L539.5,161.6 L539.9,163.9 L540.3,164.4 L540.7,162.3 L541.1,157.8 L541.5,156.7 L541.9,157.3 L542.3,158.5 L542.7,161.7 L543.1,161.5 L543.5,156.4 L543.9,160.8 L544.3,146.8 L544.7,151.9 L545.1,152.2 L545.5,158.4 L545.9,156.8 L546.3,158.5 L546.7,161.1 L547.1,161.9 L547.5,161.4 L547.9,162.1 L548.3,162.1 L548.7,161.0 L549.1,161.2 L549.5,160.7 L549.9,163.8 L550.3,161.0 L550.7,161.4 L551.1,159.0 L551.5,144.3 L551.9,150.0 L552.3,150.5 L552.7,155.3 L553.1,156.9 L553.5,156.3 L553.9,160.0 L554.3,162.7 L554.7,163.7 L555.1,164.2 L555.5,162.4 L555.9,159.2 L556.3,163.5 L556.7,159.3 L557.1,160.8 L557.5,163.0 L557.9,159.9 L558.3,161.0 L558.7,162.8 L559.1,146.0 L559.5,146.3 L559.9,142.4 L560.3,155.4 L560.7,157.6 L561.1,157.7 L561.5,161.4 L561.9,164.1 L562.3,164.9 L562.7,165.8 L563.1,166.9 L563.5,164.4 L563.9,160.0 L564.3,160.2 L564.7,160.1 L565.1,161.8 L565.5,164.2 L565.9,162.3 L566.3,145.3 L566.7,147.2 L567.1,142.2 L567.5,156.7 L567.9,159.0 L568.3,159.2 L568.7,156.8 L569.1,162.3 L569.5,166.1 L569.9,167.6 L570.3,164.7 L570.7,164.9 L571.1,162.6 L571.5,159.5 L571.9,160.4 L572.3,160.0 L572.7,163.4 L573.1,162.1 L573.5,160.1 L573.9,160.3 L574.3,150.7 L574.7,144.6 L575.1,144.2 L575.5,157.5 L575.9,157.6 L576.3,157.6 L576.7,157.4 L577.1,162.6 L577.5,164.3 L577.9,165.1 L578.3,164.1 L578.7,162.0 L579.1,163.3 L579.5,161.0 L579.9,159.8 L580.3,159.6 L580.7,161.7 L581.1,160.4 L581.5,160.0 L581.9,162.5 L582.3,145.6 L582.7,143.8 L583.1,143.5 L583.5,156.2 L583.9,159.3 L584.3,158.0 L584.7,162.6" stroke="#0c4ce0" stroke-width="1"/><path d="M69.6,142V154 M70.3,145V158 M255,132V191 M255.8,150V178 M297,129V202 M297.8,140V185 M496,137V160 M509.5,152V174 M367,158V172" stroke="#0a40d0" stroke-width="1"/><path d="M76.25,148.5V201.2M83.25,146.8V199.2M89.50,144.0V201.4M96.50,145.8V200.0M105.25,147.5V201.5M114.00,148.5V201.6M122.00,145.0V200.5M129.00,143.2V199.0M136.75,142.2V201.7M145.00,143.0V200.4M153.75,144.8V201.6M162.50,144.8V199.8M170.25,143.0V199.6M177.50,142.2V201.5M185.25,144.5V200.1M192.25,150.0V199.5M200.25,146.5V200.1M208.25,144.0V200.8M215.25,141.5V199.0M222.25,139.8V200.6M230.25,139.8V200.3M240.00,144.8V200.5M249.50,147.5V199.4M258.25,144.0V201.1M266.25,146.5V201.4M275.00,147.5V201.6M283.00,144.8V200.0M290.25,144.8V201.1M298.75,146.5V200.1M306.75,145.8V201.3M314.75,146.5V199.2M323.50,144.0V201.6M332.25,144.0V201.9M341.00,145.8V200.5M349.75,144.8V200.5M358.50,143.0V200.6M368.25,150.0V200.6M377.25,146.5V199.1M385.00,145.5V201.9M393.00,145.8V199.7M401.00,142.2V199.5M409.00,145.8V199.3M416.75,143.0V199.8M425.50,145.8V201.5M434.50,144.8V199.1M443.25,145.8V199.3M452.00,143.0V201.1M460.75,144.0V199.6M469.50,144.8V199.1M478.50,145.8V200.8M487.25,145.8V200.7M495.00,144.8V200.6M503.00,144.0V201.1M511.75,143.0V199.3M520.50,144.0V201.6M528.50,143.0V201.2M536.50,146.8V199.1M544.25,148.5V199.4M551.50,145.8V200.5M559.25,143.0V200.5M566.50,144.0V199.8M574.50,147.5V199.4M582.25,146.8V200.2" stroke="#d80000" stroke-width="1.1"/><path d="M76.95,177.8V197M90.20,177.5V197M105.95,182.5V197M122.70,174.4V197M136.55,159.9V197M163.20,170.8V197M170.95,174.7V197M215.95,176.3V197M240.70,174.4V197M249.30,159.1V197M258.05,151.7V197M266.95,176.1V197M275.70,168.8V197M306.55,170.2V197M332.95,178.8V197M341.70,179.6V197M350.45,176.8V197M368.05,156.3V197M377.05,160.8V197M393.70,172.1V197M400.80,153.0V197M408.80,173.9V197M416.55,156.7V197M425.30,163.3V197M435.20,168.5V197M443.95,171.9V197M452.70,171.8V197M461.45,167.8V197M469.30,171.0V197M478.30,164.3V197M487.05,155.0V197M502.80,163.7V197M511.55,161.7V197M521.20,170.8V197M529.20,176.2V197M537.20,177.7V197M544.95,173.1V197M559.95,177.1V197M566.30,157.1V197M582.95,181.4V197" stroke="#ff1010" stroke-width="1.2"/><path d="M69.5,195.7 L69.8,197.4 L70.1,195.8 L70.4,195.6 L70.7,194.3 L71.0,195.8 L71.3,198.7 L71.6,197.2 L71.9,198.6 L72.2,196.8 L72.5,197.2 L72.8,196.7 L73.1,192.6 L73.4,198.2 L73.7,197.4 L74.0,197.4 L74.3,192.6 L74.6,192.5 L74.9,194.3 L75.2,195.3 L75.5,197.0 L75.8,196.2 L76.1,197.4 L76.4,194.9 L76.7,201.1 L77.0,202.9 L77.3,197.5 L77.6,198.9 L77.9,194.8 L78.2,194.0 L78.5,194.4 L78.8,194.6 L79.1,196.0 L79.4,195.0 L79.7,193.6 L80.0,192.8 L80.3,194.2 L80.6,198.5 L80.9,194.5 L81.2,196.8 L81.5,197.2 L81.8,193.0 L82.1,196.4 L82.4,199.2 L82.7,191.9 L83.0,195.6 L83.3,196.1 L83.6,203.4 L83.9,202.6 L84.2,200.5 L84.5,195.7 L84.8,196.3 L85.1,194.0 L85.4,192.1 L85.7,190.9 L86.0,192.6 L86.3,193.2 L86.6,197.7 L86.9,192.4 L87.2,193.5 L87.5,191.6 L87.8,197.4 L88.1,198.6 L88.4,195.5 L88.7,195.9 L89.0,195.6 L89.3,195.3 L89.6,193.3 L89.9,201.0 L90.2,201.4 L90.5,201.6 L90.8,195.9 L91.1,196.8 L91.4,196.7 L91.7,198.7 L92.0,196.2 L92.3,195.7 L92.6,195.7 L92.9,191.1 L93.2,197.7 L93.5,197.3 L93.8,196.9 L94.1,192.0 L94.4,194.9 L94.7,198.2 L95.0,192.3 L95.3,195.9 L95.6,198.5 L95.9,193.4 L96.2,199.8 L96.5,197.5 L96.8,200.6 L97.1,201.7 L97.4,202.1 L97.7,196.3 L98.0,196.5 L98.3,194.1 L98.6,196.4 L98.9,190.5 L99.2,192.5 L99.5,193.5 L99.8,192.1 L100.1,192.3 L100.4,192.9 L100.7,200.0 L101.0,197.7 L101.3,197.1 L101.6,191.9 L101.9,197.0 L102.2,194.2 L102.5,195.5 L102.8,196.9 L103.1,195.8 L103.4,195.7 L103.7,197.7 L104.0,196.9 L104.3,197.4 L104.6,198.0 L104.9,196.3 L105.2,196.3 L105.5,201.3 L105.8,200.1 L106.1,200.5 L106.4,194.1 L106.7,196.3 L107.0,198.1 L107.3,194.7 L107.6,195.9 L107.9,198.7 L108.2,190.0 L108.5,192.0 L108.8,195.2 L109.1,195.9 L109.4,196.0 L109.7,195.1 L110.0,197.7 L110.3,196.9 L110.6,195.2 L110.9,200.8 L111.2,197.1 L111.5,195.1 L111.8,196.1 L112.1,195.8 L112.4,196.2 L112.7,191.8 L113.0,195.2 L113.3,198.5 L113.6,193.7 L113.9,196.2 L114.2,198.4 L114.5,201.9 L114.8,202.7 L115.1,195.5 L115.4,197.7 L115.7,198.5 L116.0,191.1 L116.3,197.5 L116.6,191.6 L116.9,196.0 L117.2,191.2 L117.5,195.0 L117.8,197.6 L118.1,195.1 L118.4,196.3 L118.7,198.1 L119.0,196.6 L119.3,196.1 L119.6,199.7 L119.9,198.6 L120.2,195.7 L120.5,200.8 L120.8,193.8 L121.1,198.3 L121.4,195.7 L121.7,196.6 L122.0,197.9 L122.3,202.2 L122.6,203.2 L122.9,202.3 L123.2,194.2 L123.5,196.6 L123.8,195.0 L124.1,192.8 L124.4,190.9 L124.7,195.4 L125.0,190.9 L125.3,193.2 L125.6,194.9 L125.9,195.6 L126.2,193.6 L126.5,198.0 L126.8,191.8 L127.1,194.5 L127.4,197.7 L127.7,199.6 L128.0,195.1 L128.3,196.9 L128.6,197.3 L128.9,199.1 L129.2,200.2 L129.5,202.9 L129.8,203.4 L130.1,195.2 L130.4,194.6 L130.7,195.0 L131.0,195.2 L131.3,199.6 L131.6,195.3 L131.9,193.0 L132.2,192.3 L132.5,196.8 L132.8,194.0 L133.1,198.2 L133.4,193.0 L133.7,196.7 L134.0,197.9 L134.3,195.9 L134.6,197.9 L134.9,194.8 L135.2,195.4 L135.5,195.3 L135.8,196.9 L136.1,198.0 L136.4,195.2 L136.7,193.5 L137.0,203.2 L137.3,201.8 L137.6,201.9 L137.9,195.9 L138.2,196.2 L138.5,194.7 L138.8,196.0 L139.1,199.0 L139.4,194.8 L139.7,195.7 L140.0,196.7 L140.3,194.3 L140.6,192.3 L140.9,194.3 L141.2,198.4 L141.5,192.7 L141.8,195.0 L142.1,198.5 L142.4,198.0 L142.7,196.3 L143.0,198.1 L143.3,196.7 L143.6,193.7 L143.9,192.9 L144.2,194.9 L144.5,198.3 L144.8,195.1 L145.1,194.3 L145.4,201.8 L145.7,201.9 L146.0,194.0 L146.3,191.8 L146.6,197.0 L146.9,194.3 L147.2,191.0 L147.5,196.4 L147.8,194.0 L148.1,190.0 L148.4,192.7 L148.7,195.5 L149.0,194.2 L149.3,197.5 L149.6,197.9 L149.9,197.8 L150.2,197.0 L150.5,199.2 L150.8,197.8 L151.1,197.3 L151.4,191.8 L151.7,198.3 L152.0,199.2 L152.3,195.6 L152.6,195.3 L152.9,200.6 L153.2,192.4 L153.5,197.3 L153.8,200.8 L154.1,203.5 L154.4,202.9 L154.7,201.8 L155.0,198.3 L155.3,195.5 L155.6,197.1 L155.9,193.9 L156.2,198.1 L156.5,197.4 L156.8,194.8 L157.1,194.2 L157.4,194.9 L157.7,193.7 L158.0,198.3 L158.3,195.4 L158.6,196.2 L158.9,200.2 L159.2,195.9 L159.5,197.3 L159.8,196.1 L160.1,196.2 L160.4,196.9 L160.7,196.6 L161.0,194.6 L161.3,197.9 L161.6,198.0 L161.9,199.8 L162.2,194.2 L162.5,196.2 L162.8,203.2 L163.1,200.3 L163.4,200.2 L163.7,195.4 L164.0,194.2 L164.3,200.4 L164.6,197.7 L164.9,192.3 L165.2,191.7 L165.5,198.3 L165.8,196.7 L166.1,198.7 L166.4,196.9 L166.7,193.6 L167.0,196.7 L167.3,191.8 L167.6,194.7 L167.9,196.2 L168.2,197.5 L168.5,194.7 L168.8,196.0 L169.1,197.3 L169.4,197.1 L169.7,197.7 L170.0,196.8 L170.3,195.6 L170.6,202.7 L170.9,200.6 L171.2,201.2 L171.5,198.0 L171.8,196.5 L172.1,199.4 L172.4,195.7 L172.7,193.5 L173.0,194.2 L173.3,190.0 L173.6,195.4 L173.9,198.0 L174.2,197.7 L174.5,193.3 L174.8,197.3 L175.1,197.4 L175.4,194.4 L175.7,192.9 L176.0,196.2 L176.3,198.3 L176.6,196.1 L176.9,198.0 L177.2,193.3 L177.5,194.8 L177.8,201.2 L178.1,200.2 L178.4,202.6 L178.7,196.3 L179.0,197.6 L179.3,199.6 L179.6,197.5 L179.9,197.2 L180.2,192.3 L180.5,194.2 L180.8,196.1 L181.1,194.1 L181.4,197.4 L181.7,196.9 L182.0,198.1 L182.3,195.8 L182.6,200.8 L182.9,199.0 L183.2,195.8 L183.5,196.5 L183.8,200.8 L184.1,195.5 L184.4,198.2 L184.7,198.5 L185.0,196.3 L185.3,193.7 L185.6,200.7 L185.9,200.9 L186.2,200.3 L186.5,195.8 L186.8,196.7 L187.1,197.7 L187.4,195.6 L187.7,195.2 L188.0,197.5 L188.3,190.9 L188.6,193.9 L188.9,192.9 L189.2,192.2 L189.5,197.2 L189.8,194.7 L190.1,193.4 L190.4,200.8 L190.7,198.4 L191.0,199.1 L191.3,195.9 L191.6,195.8 L191.9,198.7 L192.2,192.3 L192.5,202.8 L192.8,200.5 L193.1,202.9 L193.4,195.9 L193.7,197.7 L194.0,192.1 L194.3,191.5 L194.6,192.7 L194.9,193.3 L195.2,191.4 L195.5,194.6 L195.8,195.2 L196.1,196.4 L196.4,197.0 L196.7,199.3 L197.0,198.9 L197.3,193.4 L197.6,195.2 L197.9,194.0 L198.2,193.9 L198.5,196.1 L198.8,196.3 L199.1,197.4 L199.4,192.8 L199.7,193.6 L200.0,196.2 L200.3,195.9 L200.6,202.6 L200.9,200.9 L201.2,202.6 L201.5,197.3 L201.8,199.8 L202.1,198.4 L202.4,194.9 L202.7,193.0 L203.0,196.3 L203.3,193.0 L203.6,191.1 L203.9,192.4 L204.2,193.1 L204.5,196.8 L204.8,196.8 L205.1,196.2 L205.4,199.9 L205.7,195.3 L206.0,199.0 L206.3,197.1 L206.6,196.4 L206.9,195.9 L207.2,199.6 L207.5,195.1 L207.8,193.2 L208.1,195.6 L208.4,198.9 L208.7,200.4 L209.0,203.1 L209.3,198.2 L209.6,200.8 L209.9,196.6 L210.2,195.5 L210.5,191.2 L210.8,195.8 L211.1,196.9 L211.4,194.0 L211.7,194.4 L212.0,196.4 L212.3,196.7 L212.6,195.3 L212.9,195.2 L213.2,195.7 L213.5,191.8 L213.8,195.5 L214.1,199.0 L214.4,199.3 L214.7,191.8 L215.0,196.0 L215.3,195.8 L215.6,203.1 L215.9,200.0 L216.2,201.7 L216.5,194.5 L216.8,196.9 L217.1,197.1 L217.4,196.9 L217.7,193.2 L218.0,198.5 L218.3,198.2 L218.6,194.6 L218.9,195.4 L219.2,194.2 L219.5,198.8 L219.8,194.7 L220.1,197.8 L220.4,195.2 L220.7,194.8 L221.0,197.9 L221.3,199.2 L221.6,196.3 L221.9,194.8 L222.2,198.1 L222.5,200.4 L222.8,202.9 L223.1,200.9 L223.4,200.8 L223.7,196.0 L224.0,198.6 L224.3,196.3 L224.6,197.0 L224.9,199.1 L225.2,193.3 L225.5,195.7 L225.8,191.8 L226.1,199.5 L226.4,192.8 L226.7,192.7 L227.0,195.2 L227.3,199.7 L227.6,197.4 L227.9,192.8 L228.2,197.4 L228.5,195.2 L228.8,194.9 L229.1,200.8 L229.4,197.8 L229.7,198.0 L230.0,198.1 L230.3,195.3 L230.6,202.6 L230.9,202.3 L231.2,201.1 L231.5,194.2 L231.8,195.5 L232.1,196.5 L232.4,196.5 L232.7,196.2 L233.0,199.1 L233.3,193.0 L233.6,194.6 L233.9,199.3 L234.2,191.1 L234.5,194.5 L234.8,196.6 L235.1,196.6 L235.4,197.2 L235.7,195.8 L236.0,197.1 L236.3,196.4 L236.6,198.0 L236.9,192.1 L237.2,194.4 L237.5,196.3 L237.8,194.0 L238.1,194.0 L238.4,197.7 L238.7,194.9 L239.0,197.7 L239.3,197.9 L239.6,197.0 L239.9,197.4 L240.2,201.8 L240.5,200.8 L240.8,200.9 L241.1,196.3 L241.4,198.5 L241.7,191.6 L242.0,197.4 L242.3,197.7 L242.6,191.1 L242.9,195.1 L243.2,194.6 L243.5,193.5 L243.8,190.5 L244.1,192.5 L244.4,196.4 L244.7,198.5 L245.0,196.3 L245.3,200.0 L245.6,194.5 L245.9,199.9 L246.2,191.8 L246.5,196.3 L246.8,197.4 L247.1,197.8 L247.4,198.5 L247.7,194.1 L248.0,191.8 L248.3,195.7 L248.6,193.2 L248.9,196.5 L249.2,193.9 L249.5,195.7 L249.8,202.7 L250.1,202.3 L250.4,201.1 L250.7,197.5 L251.0,197.5 L251.3,193.7 L251.6,192.8 L251.9,195.6 L252.2,195.2 L252.5,191.6 L252.8,194.1 L253.1,193.5 L253.4,196.1 L253.7,195.3 L254.0,195.9 L254.3,195.5 L254.6,198.6 L254.9,199.4 L255.2,195.5 L255.5,198.2 L255.8,194.6 L256.1,196.5 L256.4,197.9 L256.7,199.6 L257.0,195.5 L257.3,196.1 L257.6,196.7 L257.9,193.0 L258.2,196.3 L258.5,202.3 L258.8,203.2 L259.1,201.2 L259.4,196.9 L259.7,193.4 L260.0,197.6 L260.3,196.7 L260.6,198.7 L260.9,194.5 L261.2,191.9 L261.5,196.1 L261.8,199.2 L262.1,193.5 L262.4,199.3 L262.7,196.2 L263.0,197.8 L263.3,196.4 L263.6,194.5 L263.9,198.8 L264.2,195.5 L264.5,196.9 L264.8,197.7 L265.1,193.5 L265.4,197.9 L265.7,197.5 L266.0,195.9 L266.3,195.1 L266.6,203.4 L266.9,200.2 L267.2,201.4 L267.5,200.0 L267.8,193.6 L268.1,195.0 L268.4,190.8 L268.7,196.7 L269.0,193.8 L269.3,196.5 L269.6,199.1 L269.9,194.8 L270.2,194.6 L270.5,194.6 L270.8,194.4 L271.1,194.9 L271.4,197.7 L271.7,196.4 L272.0,196.4 L272.3,195.9 L272.6,198.3 L272.9,197.4 L273.2,196.0 L273.5,197.8 L273.8,196.0 L274.1,193.8 L274.4,199.5 L274.7,197.3 L275.0,194.2 L275.3,201.3 L275.6,203.2 L275.9,203.1 L276.2,198.3 L276.5,198.5 L276.8,196.4 L277.1,196.8 L277.4,191.5 L277.7,195.2 L278.0,194.7 L278.3,199.0 L278.6,196.6 L278.9,194.9 L279.2,199.2 L279.5,197.7 L279.8,195.1 L280.1,195.5 L280.4,200.8 L280.7,195.0 L281.0,195.1 L281.3,195.9 L281.6,194.4 L281.9,196.3 L282.2,196.5 L282.5,196.5 L282.8,191.8 L283.1,192.8 L283.4,200.1 L283.7,203.3 L284.0,198.8 L284.3,198.4 L284.6,195.7 L284.9,195.7 L285.2,197.6 L285.5,190.3 L285.8,194.8 L286.1,196.1 L286.4,198.2 L286.7,194.5 L287.0,191.2 L287.3,196.2 L287.6,193.3 L287.9,195.4 L288.2,198.0 L288.5,193.8 L288.8,199.2 L289.1,197.6 L289.4,197.0 L289.7,196.3 L290.0,194.6 L290.3,196.8 L290.6,201.9 L290.9,203.1 L291.2,203.5 L291.5,196.2 L291.8,197.2 L292.1,198.0 L292.4,196.8 L292.7,194.3 L293.0,192.3 L293.3,194.7 L293.6,196.8 L293.9,192.4 L294.2,192.9 L294.5,195.6 L294.8,191.9 L295.1,195.7 L295.4,195.3 L295.7,197.3 L296.0,194.8 L296.3,194.4 L296.6,195.4 L296.9,196.2 L297.2,194.8 L297.5,196.3 L297.8,198.0 L298.1,198.9 L298.4,200.1 L298.7,194.6 L299.0,201.4 L299.3,200.8 L299.6,202.8 L299.9,192.4 L300.2,191.8 L300.5,198.0 L300.8,197.0 L301.1,196.8 L301.4,190.9 L301.7,195.1 L302.0,194.2 L302.3,194.4 L302.6,196.1 L302.9,197.7 L303.2,200.5 L303.5,191.9 L303.8,193.8 L304.1,193.2 L304.4,199.5 L304.7,194.7 L305.0,196.8 L305.3,197.2 L305.6,191.8 L305.9,198.6 L306.2,198.1 L306.5,195.2 L306.8,195.2 L307.1,200.7 L307.4,200.9 L307.7,200.7 L308.0,194.4 L308.3,198.3 L308.6,196.0 L308.9,194.7 L309.2,193.6 L309.5,194.1 L309.8,195.9 L310.1,195.3 L310.4,192.1 L310.7,196.1 L311.0,196.0 L311.3,194.0 L311.6,198.0 L311.9,195.7 L312.2,195.6 L312.5,198.1 L312.8,199.2 L313.1,194.8 L313.4,197.3 L313.7,194.4 L314.0,200.8 L314.3,195.2 L314.6,198.9 L314.9,194.9 L315.2,203.0 L315.5,200.7 L315.8,196.3 L316.1,196.1 L316.4,194.7 L316.7,200.2 L317.0,195.3 L317.3,191.2 L317.6,196.4 L317.9,190.7 L318.2,197.2 L318.5,193.6 L318.8,195.6 L319.1,198.6 L319.4,196.6 L319.7,193.2 L320.0,192.6 L320.3,198.9 L320.6,197.9 L320.9,194.5 L321.2,198.2 L321.5,197.4 L321.8,197.7 L322.1,191.8 L322.4,195.6 L322.7,198.3 L323.0,197.9 L323.3,198.2 L323.6,191.8 L323.9,203.3 L324.2,203.4 L324.5,195.6 L324.8,196.4 L325.1,198.2 L325.4,194.8 L325.7,197.8 L326.0,193.1 L326.3,195.2 L326.6,193.3 L326.9,194.9 L327.2,193.3 L327.5,191.7 L327.8,198.1 L328.1,197.0 L328.4,195.1 L328.7,196.7 L329.0,198.5 L329.3,194.1 L329.6,196.1 L329.9,197.5 L330.2,197.5 L330.5,195.6 L330.8,191.8 L331.1,199.0 L331.4,197.0 L331.7,196.3 L332.0,195.7 L332.3,196.9 L332.6,202.1 L332.9,201.1 L333.2,201.5 L333.5,194.3 L333.8,195.2 L334.1,194.5 L334.4,193.3 L334.7,194.5 L335.0,194.8 L335.3,192.6 L335.6,192.8 L335.9,195.1 L336.2,198.9 L336.5,196.1 L336.8,193.8 L337.1,197.4 L337.4,198.6 L337.7,197.2 L338.0,197.0 L338.3,195.4 L338.6,196.7 L338.9,193.8 L339.2,197.2 L339.5,199.3 L339.8,197.1 L340.1,199.4 L340.4,198.1 L340.7,196.8 L341.0,193.7 L341.3,201.3 L341.6,203.3 L341.9,203.5 L342.2,199.6 L342.5,195.8 L342.8,191.9 L343.1,197.6 L343.4,199.5 L343.7,190.2 L344.0,194.8 L344.3,195.7 L344.6,194.1 L344.9,196.3 L345.2,191.1 L345.5,198.0 L345.8,197.1 L346.1,196.4 L346.4,195.0 L346.7,197.7 L347.0,195.2 L347.3,196.8 L347.6,195.2 L347.9,191.8 L348.2,196.2 L348.5,196.7 L348.8,198.0 L349.1,194.4 L349.4,196.2 L349.7,197.7 L350.0,200.6 L350.3,203.1 L350.6,200.6 L350.9,196.5 L351.2,195.2 L351.5,192.9 L351.8,194.9 L352.1,192.2 L352.4,198.1 L352.7,191.8 L353.0,193.5 L353.3,195.5 L353.6,194.3 L353.9,198.6 L354.2,195.9 L354.5,193.2 L354.8,198.7 L355.1,195.7 L355.4,200.8 L355.7,194.5 L356.0,195.3 L356.3,196.5 L356.6,193.9 L356.9,197.9 L357.2,199.6 L357.5,200.2 L357.8,197.5 L358.1,196.2 L358.4,199.4 L358.7,202.3 L359.0,201.1 L359.3,200.5 L359.6,196.3 L359.9,194.6 L360.2,194.6 L360.5,191.1 L360.8,194.7 L361.1,195.8 L361.4,195.7 L361.7,194.2 L362.0,194.3 L362.3,197.0 L362.6,195.4 L362.9,197.5 L363.2,197.6 L363.5,196.8 L363.8,199.2 L364.1,195.0 L364.4,195.5 L364.7,194.5 L365.0,194.5 L365.3,199.7 L365.6,200.2 L365.9,196.4 L366.2,197.6 L366.5,198.9 L366.8,198.1 L367.1,199.0 L367.4,193.5 L367.7,194.9 L368.0,197.3 L368.3,199.5 L368.6,202.0 L368.9,201.6 L369.2,203.3 L369.5,196.1 L369.8,194.6 L370.1,196.4 L370.4,194.9 L370.7,192.7 L371.0,194.2 L371.3,194.6 L371.6,195.3 L371.9,194.9 L372.2,194.8 L372.5,191.2 L372.8,194.6 L373.1,197.2 L373.4,197.4 L373.7,194.3 L374.0,194.7 L374.3,193.8 L374.6,193.2 L374.9,197.2 L375.2,198.0 L375.5,196.1 L375.8,197.0 L376.1,199.3 L376.4,193.8 L376.7,196.2 L377.0,196.1 L377.3,198.3 L377.6,201.6 L377.9,200.8 L378.2,200.4 L378.5,196.4 L378.8,196.9 L379.1,194.0 L379.4,198.5 L379.7,193.5 L380.0,190.6 L380.3,194.1 L380.6,192.9 L380.9,192.6 L381.2,194.4 L381.5,196.3 L381.8,193.6 L382.1,196.0 L382.4,199.4 L382.7,197.8 L383.0,196.0 L383.3,196.6 L383.6,196.0 L383.9,196.2 L384.2,197.9 L384.5,196.1 L384.8,191.8 L385.1,196.3 L385.4,203.1 L385.7,203.2 L386.0,197.7 L386.3,194.0 L386.6,193.8 L386.9,192.6 L387.2,190.7 L387.5,190.7 L387.8,195.4 L388.1,193.1 L388.4,190.5 L388.7,191.6 L389.0,196.6 L389.3,194.0 L389.6,195.5 L389.9,197.0 L390.2,199.3 L390.5,200.6 L390.8,198.6 L391.1,196.6 L391.4,196.7 L391.7,200.3 L392.0,199.4 L392.3,195.6 L392.6,197.3 L392.9,196.9 L393.2,202.4 L393.5,202.6 L393.8,200.2 L394.1,194.5 L394.4,195.2 L394.7,197.8 L395.0,191.9 L395.3,195.7 L395.6,194.2 L395.9,197.8 L396.2,190.9 L396.5,195.6 L396.8,194.6 L397.1,195.7 L397.4,197.0 L397.7,200.5 L398.0,197.2 L398.3,197.5 L398.6,193.4 L398.9,197.7 L399.2,193.5 L399.5,196.1 L399.8,197.3 L400.1,199.3 L400.4,198.4 L400.7,196.8 L401.0,198.2 L401.3,200.9 L401.6,201.0 L401.9,201.1 L402.2,194.2 L402.5,198.8 L402.8,195.3 L403.1,197.2 L403.4,192.5 L403.7,196.9 L404.0,194.9 L404.3,191.0 L404.6,196.2 L404.9,193.1 L405.2,198.4 L405.5,194.6 L405.8,195.9 L406.1,196.9 L406.4,195.6 L406.7,196.9 L407.0,195.1 L407.3,197.8 L407.6,196.3 L407.9,196.8 L408.2,191.8 L408.5,198.9 L408.8,196.4 L409.1,192.4 L409.4,200.6 L409.7,202.9 L410.0,196.4 L410.3,195.9 L410.6,200.8 L410.9,195.4 L411.2,196.7 L411.5,194.0 L411.8,192.1 L412.1,196.9 L412.4,196.6 L412.7,198.2 L413.0,197.1 L413.3,194.5 L413.6,192.6 L413.9,194.9 L414.2,194.8 L414.5,194.5 L414.8,197.6 L415.1,197.0 L415.4,195.7 L415.7,196.7 L416.0,196.0 L416.3,196.8 L416.6,198.0 L416.9,198.4 L417.2,201.3 L417.5,201.6 L417.8,195.2 L418.1,192.7 L418.4,195.5 L418.7,195.7 L419.0,192.0 L419.3,193.7 L419.6,196.2 L419.9,196.9 L420.2,198.1 L420.5,193.0 L420.8,192.2 L421.1,197.0 L421.4,198.4 L421.7,196.7 L422.0,193.4 L422.3,198.0 L422.6,198.0 L422.9,197.5 L423.2,195.2 L423.5,197.0 L423.8,198.0 L424.1,195.1 L424.4,192.2 L424.7,197.0 L425.0,197.4 L425.3,196.3 L425.6,198.3 L425.9,201.1 L426.2,200.7 L426.5,199.8 L426.8,195.7 L427.1,200.8 L427.4,199.1 L427.7,197.0 L428.0,196.1 L428.3,198.5 L428.6,194.1 L428.9,194.3 L429.2,192.5 L429.5,196.3 L429.8,198.7 L430.1,197.5 L430.4,197.2 L430.7,195.9 L431.0,196.7 L431.3,193.2 L431.6,198.6 L431.9,195.4 L432.2,193.9 L432.5,194.6 L432.8,194.5 L433.1,198.2 L433.4,198.6 L433.7,193.3 L434.0,198.3 L434.3,198.3 L434.6,195.0 L434.9,201.5 L435.2,200.8 L435.5,195.5 L435.8,191.8 L436.1,196.8 L436.4,192.4 L436.7,197.2 L437.0,192.2 L437.3,193.1 L437.6,192.6 L437.9,193.4 L438.2,197.7 L438.5,197.1 L438.8,197.1 L439.1,197.0 L439.4,192.9 L439.7,195.2 L440.0,195.1 L440.3,194.1 L440.6,197.4 L440.9,194.7 L441.2,194.7 L441.5,194.0 L441.8,191.8 L442.1,197.6 L442.4,199.2 L442.7,196.7 L443.0,194.2 L443.3,191.8 L443.6,200.1 L443.9,202.7 L444.2,203.3 L444.5,195.3 L444.8,196.2 L445.1,193.4 L445.4,194.1 L445.7,194.4 L446.0,192.0 L446.3,191.9 L446.6,191.4 L446.9,192.6 L447.2,194.9 L447.5,197.1 L447.8,195.7 L448.1,195.4 L448.4,194.3 L448.7,196.4 L449.0,195.2 L449.3,198.4 L449.6,196.1 L449.9,198.0 L450.2,196.9 L450.5,196.0 L450.8,196.5 L451.1,194.3 L451.4,197.4 L451.7,195.6 L452.0,194.4 L452.3,202.6 L452.6,203.3 L452.9,202.8 L453.2,196.0 L453.5,195.1 L453.8,196.9 L454.1,198.0 L454.4,197.7 L454.7,195.8 L455.0,191.6 L455.3,191.8 L455.6,195.3 L455.9,195.9 L456.2,200.1 L456.5,194.2 L456.8,198.8 L457.1,198.0 L457.4,192.6 L457.7,194.5 L458.0,196.7 L458.3,195.2 L458.6,196.0 L458.9,197.3 L459.2,194.5 L459.5,197.3 L459.8,194.9 L460.1,195.1 L460.4,197.5 L460.7,195.0 L461.0,200.0 L461.3,200.9 L461.6,201.1 L461.9,194.0 L462.2,196.6 L462.5,193.9 L462.8,193.0 L463.1,191.7 L463.4,198.5 L463.7,195.0 L464.0,193.9 L464.3,196.9 L464.6,190.8 L464.9,195.7 L465.2,194.8 L465.5,197.8 L465.8,193.6 L466.1,196.6 L466.4,196.3 L466.7,199.4 L467.0,195.3 L467.3,196.3 L467.6,197.3 L467.9,197.3 L468.2,197.6 L468.5,196.6 L468.8,194.3 L469.1,199.0 L469.4,200.2 L469.7,203.1 L470.0,202.1 L470.3,203.1 L470.6,193.1 L470.9,197.3 L471.2,192.0 L471.5,196.7 L471.8,198.3 L472.1,191.2 L472.4,193.8 L472.7,190.3 L473.0,196.4 L473.3,193.3 L473.6,194.8 L473.9,196.0 L474.2,197.5 L474.5,195.5 L474.8,196.3 L475.1,195.1 L475.4,196.6 L475.7,193.7 L476.0,196.4 L476.3,192.0 L476.6,195.2 L476.9,200.5 L477.2,196.5 L477.5,193.5 L477.8,196.9 L478.1,194.2 L478.4,192.7 L478.7,203.4 L479.0,200.3 L479.3,200.1 L479.6,193.9 L479.9,193.7 L480.2,194.0 L480.5,197.4 L480.8,194.3 L481.1,197.4 L481.4,194.2 L481.7,190.0 L482.0,195.1 L482.3,198.4 L482.6,196.1 L482.9,194.5 L483.2,194.9 L483.5,197.7 L483.8,194.7 L484.1,193.6 L484.4,196.7 L484.7,196.5 L485.0,194.8 L485.3,194.2 L485.6,197.2 L485.9,192.4 L486.2,194.9 L486.5,195.2 L486.8,200.3 L487.1,194.2 L487.4,197.8 L487.7,203.4 L488.0,202.3 L488.3,196.8 L488.6,194.4 L488.9,195.4 L489.2,197.3 L489.5,192.5 L489.8,193.2 L490.1,194.7 L490.4,193.9 L490.7,193.8 L491.0,190.4 L491.3,194.6 L491.6,195.6 L491.9,196.2 L492.2,196.5 L492.5,198.1 L492.8,200.8 L493.1,193.8 L493.4,194.3 L493.7,197.5 L494.0,191.8 L494.3,194.0 L494.6,194.3 L494.9,193.9 L495.2,202.1 L495.5,202.3 L495.8,201.6 L496.1,196.4 L496.4,195.3 L496.7,196.4 L497.0,196.1 L497.3,195.8 L497.6,190.2 L497.9,193.4 L498.2,192.8 L498.5,196.4 L498.8,191.5 L499.1,193.8 L499.4,195.3 L499.7,195.6 L500.0,198.5 L500.3,195.3 L500.6,198.4 L500.9,193.1 L501.2,192.3 L501.5,199.0 L501.8,197.3 L502.1,197.4 L502.4,196.6 L502.7,197.4 L503.0,193.6 L503.3,200.0 L503.6,201.4 L503.9,203.4 L504.2,193.5 L504.5,194.1 L504.8,196.3 L505.1,197.9 L505.4,196.9 L505.7,195.0 L506.0,195.7 L506.3,194.8 L506.6,194.8 L506.9,194.6 L507.2,194.5 L507.5,197.0 L507.8,196.1 L508.1,197.1 L508.4,195.5 L508.7,199.8 L509.0,196.7 L509.3,196.5 L509.6,199.9 L509.9,196.6 L510.2,197.0 L510.5,196.8 L510.8,192.9 L511.1,198.5 L511.4,193.5 L511.7,199.0 L512.0,202.5 L512.3,200.9 L512.6,203.4 L512.9,196.2 L513.2,196.0 L513.5,199.2 L513.8,195.8 L514.1,195.4 L514.4,193.9 L514.7,193.2 L515.0,197.8 L515.3,196.9 L515.6,198.8 L515.9,194.7 L516.2,196.1 L516.5,194.4 L516.8,198.4 L517.1,193.2 L517.4,197.5 L517.7,198.7 L518.0,199.4 L518.3,194.2 L518.6,198.7 L518.9,194.7 L519.2,194.6 L519.5,193.4 L519.8,198.8 L520.1,199.9 L520.4,195.0 L520.7,200.2 L521.0,203.4 L521.3,201.2 L521.6,192.4 L521.9,191.8 L522.2,192.4 L522.5,197.0 L522.8,192.5 L523.1,193.9 L523.4,196.7 L523.7,196.1 L524.0,193.3 L524.3,193.8 L524.6,192.7 L524.9,199.1 L525.2,193.9 L525.5,196.3 L525.8,196.4 L526.1,196.1 L526.4,198.6 L526.7,192.8 L527.0,194.2 L527.3,196.8 L527.6,195.9 L527.9,198.3 L528.2,192.8 L528.5,198.2 L528.8,201.0 L529.1,202.4 L529.4,203.2 L529.7,195.8 L530.0,197.1 L530.3,192.2 L530.6,194.1 L530.9,196.1 L531.2,198.1 L531.5,196.0 L531.8,193.9 L532.1,192.1 L532.4,193.0 L532.7,194.1 L533.0,196.4 L533.3,196.2 L533.6,200.0 L533.9,196.9 L534.2,193.9 L534.5,199.7 L534.8,198.4 L535.1,196.5 L535.4,194.7 L535.7,192.2 L536.0,194.1 L536.3,198.3 L536.6,194.5 L536.9,200.7 L537.2,200.7 L537.5,197.7 L537.8,199.4 L538.1,194.5 L538.4,197.9 L538.7,193.1 L539.0,196.4 L539.3,195.0 L539.6,195.0 L539.9,196.7 L540.2,194.8 L540.5,197.7 L540.8,197.7 L541.1,196.6 L541.4,195.1 L541.7,194.6 L542.0,195.1 L542.3,195.9 L542.6,196.2 L542.9,200.8 L543.2,197.7 L543.5,198.0 L543.8,194.4 L544.1,194.7 L544.4,195.6 L544.7,203.3 L545.0,202.7 L545.3,198.7 L545.6,191.8 L545.9,196.2 L546.2,196.3 L546.5,195.6 L546.8,196.1 L547.1,195.2 L547.4,194.9 L547.7,190.5 L548.0,193.3 L548.3,190.8 L548.6,197.2 L548.9,197.0 L549.2,195.9 L549.5,194.5 L549.8,195.0 L550.1,200.4 L550.4,200.1 L550.7,196.2 L551.0,199.1 L551.3,192.8 L551.6,192.0 L551.9,201.6 L552.2,200.6 L552.5,200.8 L552.8,194.8 L553.1,196.4 L553.4,196.4 L553.7,195.2 L554.0,196.9 L554.3,198.5 L554.6,191.8 L554.9,194.9 L555.2,194.3 L555.5,196.0 L555.8,192.4 L556.1,192.4 L556.4,191.8 L556.7,197.5 L557.0,196.7 L557.3,196.5 L557.6,191.8 L557.9,195.5 L558.2,194.6 L558.5,193.2 L558.8,194.3 L559.1,197.8 L559.4,197.5 L559.7,201.7 L560.0,200.6 L560.3,196.4 L560.6,197.5 L560.9,196.1 L561.2,195.3 L561.5,194.9 L561.8,193.4 L562.1,199.1 L562.4,195.6 L562.7,195.6 L563.0,199.4 L563.3,198.4 L563.6,192.4 L563.9,197.8 L564.2,198.1 L564.5,200.4 L564.8,199.2 L565.1,198.0 L565.4,193.7 L565.7,194.4 L566.0,196.9 L566.3,197.4 L566.6,194.1 L566.9,200.8 L567.2,200.2 L567.5,195.7 L567.8,193.6 L568.1,199.0 L568.4,199.3 L568.7,195.0 L569.0,197.1 L569.3,195.6 L569.6,196.0 L569.9,195.6 L570.2,193.2 L570.5,196.5 L570.8,198.0 L571.1,194.3 L571.4,200.6 L571.7,200.8 L572.0,200.3 L572.3,200.7 L572.6,197.9 L572.9,195.6 L573.2,195.0 L573.5,194.5 L573.8,196.6 L574.1,196.2 L574.4,197.8 L574.7,203.5 L575.0,203.2 L575.3,203.1 L575.6,197.3 L575.9,199.6 L576.2,197.4 L576.5,193.9 L576.8,199.6 L577.1,198.7 L577.4,194.9 L577.7,193.9 L578.0,195.7 L578.3,199.1 L578.6,195.5 L578.9,194.5 L579.2,196.1 L579.5,191.8 L579.8,198.2 L580.1,196.9 L580.4,199.1 L580.7,197.2 L581.0,197.4 L581.3,196.7 L581.6,192.9 L581.9,196.6 L582.2,197.1 L582.5,201.7 L582.8,201.0 L583.1,202.5 L583.4,199.2 L583.7,197.4 L584.0,193.3 L584.3,195.7 L584.6,195.8 L584.9,194.5" stroke="#ff1010" stroke-width="1.1"/></g><g fill="#84f0f0"><circle cx="76.25" cy="148.50" r="2.4"/><circle cx="83.25" cy="146.75" r="2.4"/><circle cx="89.50" cy="144.00" r="2.4"/><circle cx="96.50" cy="145.75" r="2.4"/><circle cx="105.25" cy="147.50" r="2.4"/><circle cx="114.00" cy="148.50" r="2.4"/><circle cx="122.00" cy="145.00" r="2.4"/><circle cx="129.00" cy="143.25" r="2.4"/><circle cx="136.75" cy="142.25" r="2.4"/><circle cx="145.00" cy="143.00" r="2.4"/><circle cx="153.75" cy="144.75" r="2.4"/><circle cx="162.50" cy="144.75" r="2.4"/><circle cx="170.25" cy="143.00" r="2.4"/><circle cx="177.50" cy="142.25" r="2.4"/><circle cx="185.25" cy="144.50" r="2.4"/><circle cx="192.25" cy="150.00" r="2.4"/><circle cx="200.25" cy="146.50" r="2.4"/><circle cx="208.25" cy="144.00" r="2.4"/><circle cx="215.25" cy="141.50" r="2.4"/><circle cx="222.25" cy="139.75" r="2.4"/><circle cx="230.25" cy="139.75" r="2.4"/><circle cx="240.00" cy="144.75" r="2.4"/><circle cx="249.50" cy="147.50" r="2.4"/><circle cx="258.25" cy="144.00" r="2.4"/><circle cx="266.25" cy="146.50" r="2.4"/><circle cx="275.00" cy="147.50" r="2.4"/><circle cx="283.00" cy="144.75" r="2.4"/><circle cx="290.25" cy="144.75" r="2.4"/><circle cx="298.75" cy="146.50" r="2.4"/><circle cx="306.75" cy="145.75" r="2.4"/><circle cx="314.75" cy="146.50" r="2.4"/><circle cx="323.50" cy="144.00" r="2.4"/><circle cx="332.25" cy="144.00" r="2.4"/><circle cx="341.00" cy="145.75" r="2.4"/><circle cx="349.75" cy="144.75" r="2.4"/><circle cx="358.50" cy="143.00" r="2.4"/><circle cx="368.25" cy="150.00" r="2.4"/><circle cx="377.25" cy="146.50" r="2.4"/><circle cx="385.00" cy="145.50" r="2.4"/><circle cx="393.00" cy="145.75" r="2.4"/><circle cx="401.00" cy="142.25" r="2.4"/><circle cx="409.00" cy="145.75" r="2.4"/><circle cx="416.75" cy="143.00" r="2.4"/><circle cx="425.50" cy="145.75" r="2.4"/><circle cx="434.50" cy="144.75" r="2.4"/><circle cx="443.25" cy="145.75" r="2.4"/><circle cx="452.00" cy="143.00" r="2.4"/><circle cx="460.75" cy="144.00" r="2.4"/><circle cx="469.50" cy="144.75" r="2.4"/><circle cx="478.50" cy="145.75" r="2.4"/><circle cx="487.25" cy="145.75" r="2.4"/><circle cx="495.00" cy="144.75" r="2.4"/><circle cx="503.00" cy="144.00" r="2.4"/><circle cx="511.75" cy="143.00" r="2.4"/><circle cx="520.50" cy="144.00" r="2.4"/><circle cx="528.50" cy="143.00" r="2.4"/><circle cx="536.50" cy="146.75" r="2.4"/><circle cx="544.25" cy="148.50" r="2.4"/><circle cx="551.50" cy="145.75" r="2.4"/><circle cx="559.25" cy="143.00" r="2.4"/><circle cx="566.50" cy="144.00" r="2.4"/><circle cx="574.50" cy="147.50" r="2.4"/><circle cx="582.25" cy="146.75" r="2.4"/></g></svg>
<div class="t" style="left:153.3px;top:261px;width:300px;height:20px;line-height:20px;text-align:center;font-size:11.5px;color:#111;font-weight:bold;transform:scaleX(1.030);transform-origin:center center;">IBI Series</div>
<div class="" style="left:68px;top:281px;width:517px;height:62px;background:#000;border:1px solid;border-color:#707070 #bcbcbc #bcbcbc #707070"></div>
<div class="t" style="left:-239.7px;top:273.5px;width:300px;height:20px;line-height:20px;text-align:right;font-size:11px;color:#1c1c30;font-weight:normal;transform:scaleX(0.945);transform-origin:right center;">1200.0</div>
<div class="" style="left:63px;top:283px;width:4px;height:1px;background:#2a2a2a"></div>
<div class="t" style="left:-239.7px;top:292.5px;width:300px;height:20px;line-height:20px;text-align:right;font-size:11px;color:#1c1c30;font-weight:normal;transform:scaleX(0.945);transform-origin:right center;">1000.0</div>
<div class="" style="left:63px;top:302px;width:4px;height:1px;background:#2a2a2a"></div>
<div class="t" style="left:-239.7px;top:312px;width:300px;height:20px;line-height:20px;text-align:right;font-size:11px;color:#1c1c30;font-weight:normal;transform:scaleX(0.945);transform-origin:right center;">800.0</div>
<div class="" style="left:63px;top:322px;width:4px;height:1px;background:#2a2a2a"></div>
<div class="t" style="left:-239.7px;top:331px;width:300px;height:20px;line-height:20px;text-align:right;font-size:11px;color:#1c1c30;font-weight:normal;transform:scaleX(0.945);transform-origin:right center;">600.0</div>
<div class="" style="left:63px;top:340px;width:4px;height:1px;background:#2a2a2a"></div>
<div class="" style="left:68px;top:343px;width:1px;height:5px;background:#222"></div>
<div class="t" style="left:-80.9px;top:345px;width:300px;height:20px;line-height:20px;text-align:center;font-size:11px;color:#1c1c30;font-weight:normal;transform:scaleX(0.930);transform-origin:center center;">1</div>
<div class="" style="left:102px;top:343px;width:1px;height:5px;background:#222"></div>
<div class="t" style="left:-47.18000000000001px;top:345px;width:300px;height:20px;line-height:20px;text-align:center;font-size:11px;color:#1c1c30;font-weight:normal;transform:scaleX(0.930);transform-origin:center center;">5</div>
<div class="" style="left:144px;top:343px;width:1px;height:5px;background:#222"></div>
<div class="t" style="left:-5.029999999999973px;top:345px;width:300px;height:20px;line-height:20px;text-align:center;font-size:11px;color:#1c1c30;font-weight:normal;transform:scaleX(0.930);transform-origin:center center;">10</div>
<div class="" style="left:186px;top:343px;width:1px;height:5px;background:#222"></div>
<div class="t" style="left:37.120000000000005px;top:345px;width:300px;height:20px;line-height:20px;text-align:center;font-size:11px;color:#1c1c30;font-weight:normal;transform:scaleX(0.930);transform-origin:center center;">15</div>
<div class="" style="left:229px;top:343px;width:1px;height:5px;background:#222"></div>
<div class="t" style="left:79.26999999999998px;top:345px;width:300px;height:20px;line-height:20px;text-align:center;font-size:11px;color:#1c1c30;font-weight:normal;transform:scaleX(0.930);transform-origin:center center;">20</div>
<div class="" style="left:271px;top:343px;width:1px;height:5px;background:#222"></div>
<div class="t" style="left:121.42000000000002px;top:345px;width:300px;height:20px;line-height:20px;text-align:center;font-size:11px;color:#1c1c30;font-weight:normal;transform:scaleX(0.930);transform-origin:center center;">25</div>
<div class="" style="left:313px;top:343px;width:1px;height:5px;background:#222"></div>
<div class="t" style="left:163.57px;top:345px;width:300px;height:20px;line-height:20px;text-align:center;font-size:11px;color:#1c1c30;font-weight:normal;transform:scaleX(0.930);transform-origin:center center;">30</div>
<div class="" style="left:355px;top:343px;width:1px;height:5px;background:#222"></div>
<div class="t" style="left:205.72000000000003px;top:345px;width:300px;height:20px;line-height:20px;text-align:center;font-size:11px;color:#1c1c30;font-weight:normal;transform:scaleX(0.930);transform-origin:center center;">35</div>
<div class="" style="left:397px;top:343px;width:1px;height:5px;background:#222"></div>
<div class="t" style="left:247.87px;top:345px;width:300px;height:20px;line-height:20px;text-align:center;font-size:11px;color:#1c1c30;font-weight:normal;transform:scaleX(0.930);transform-origin:center center;">40</div>
<div class="" style="left:439px;top:343px;width:1px;height:5px;background:#222"></div>
<div class="t" style="left:290.02px;top:345px;width:300px;height:20px;line-height:20px;text-align:center;font-size:11px;color:#1c1c30;font-weight:normal;transform:scaleX(0.930);transform-origin:center center;">45</div>
<div class="" style="left:481px;top:343px;width:1px;height:5px;background:#222"></div>
<div class="t" style="left:332.17px;top:345px;width:300px;height:20px;line-height:20px;text-align:center;font-size:11px;color:#1c1c30;font-weight:normal;transform:scaleX(0.930);transform-origin:center center;">50</div>
<div class="" style="left:524px;top:343px;width:1px;height:5px;background:#222"></div>
<div class="t" style="left:374.31999999999994px;top:345px;width:300px;height:20px;line-height:20px;text-align:center;font-size:11px;color:#1c1c30;font-weight:normal;transform:scaleX(0.930);transform-origin:center center;">55</div>
<div class="" style="left:566px;top:343px;width:1px;height:5px;background:#222"></div>
<div class="t" style="left:414.66999999999996px;top:345px;width:300px;height:20px;line-height:20px;text-align:center;font-size:11px;color:#1c1c30;font-weight:normal;transform:scaleX(0.930);transform-origin:center center;">60</div>
<div class="" style="left:583px;top:343px;width:1px;height:5px;background:#222"></div>
<div class="t" style="left:436.3299999999999px;top:345px;width:300px;height:20px;line-height:20px;text-align:center;font-size:11px;color:#1c1c30;font-weight:normal;transform:scaleX(0.930);transform-origin:center center;">62</div>
<div class="t" style="left:162.3px;top:359px;width:300px;height:20px;line-height:20px;text-align:center;font-size:11px;color:#1c1c30;font-weight:normal;transform:scaleX(0.942);transform-origin:center center;">IBI #</div>
<div class="t" style="left:-132.5px;top:307.8px;width:300px;height:20px;line-height:20px;text-align:center;font-size:11.5px;color:#241c30;font-weight:normal;transform:rotate(-90deg) scaleX(0.966);transform-origin:center center;">Milliseconds</div>
<svg width="920" height="400"><path d="M69.25,321.25 L77.68,325.50 L86.11,321.00 L94.54,298.50 L102.97,307.75 L111.40,309.50 L119.83,314.00 L128.26,315.00 L136.69,308.00 L145.12,302.50 L153.55,304.25 L161.98,310.50 L170.41,316.75 L178.84,314.00 L187.27,313.00 L195.70,309.25 L204.13,316.00 L212.56,314.00 L220.99,319.25 L229.42,308.75 L237.85,293.50 L246.28,293.50 L254.71,300.00 L263.14,304.50 L271.57,306.25 L280.00,310.50 L288.43,314.50 L296.86,306.75 L305.29,310.50 L313.72,303.75 L322.15,301.25 L330.58,305.50 L339.01,294.25 L347.44,296.25 L355.87,300.50 L364.30,296.00 L372.73,297.75 L381.16,310.00 L389.59,308.50 L398.02,312.50 L406.45,309.25 L414.88,305.10 L423.31,304.10 L431.74,299.10 L440.17,296.00 L448.60,301.40 L457.03,301.50 L465.46,298.75 L473.89,300.75 L482.32,300.50 L490.75,309.50 L499.18,308.50 L507.61,306.00 L516.04,301.25 L524.47,305.00 L532.90,315.00 L541.33,310.25 L549.76,311.75 L558.19,317.50 L566.62,315.25 L575.05,311.00 L583.48,312.50" fill="none" stroke="#c8c814" stroke-width="1.1" stroke-linejoin="round"/></svg>
<div class="t" style="left:154px;top:387.5px;width:300px;height:20px;line-height:20px;text-align:center;font-size:11.5px;color:#111;font-weight:bold;transform:scaleX(1.014);transform-origin:center center;">Ensemble Averages</div>
<div class="" style="left:68px;top:411px;width:485px;height:212px;background:#000;border:1px solid;border-color:#707070 #bcbcbc #bcbcbc #707070"></div>
<div class="t" style="left:-239.5px;top:403px;width:300px;height:20px;line-height:20px;text-align:right;font-size:11.5px;color:#1c1c28;font-weight:normal;transform:scaleX(0.820);transform-origin:right center;">0.003</div>
<div class="" style="left:63px;top:412px;width:4px;height:1px;background:#2a2a2a"></div>
<div class="t" style="left:-239.5px;top:455.3px;width:300px;height:20px;line-height:20px;text-align:right;font-size:11.5px;color:#1c1c28;font-weight:normal;transform:scaleX(0.820);transform-origin:right center;">0.002</div>
<div class="" style="left:63px;top:465px;width:4px;height:1px;background:#2a2a2a"></div>
<div class="t" style="left:-239.5px;top:507.6px;width:300px;height:20px;line-height:20px;text-align:right;font-size:11.5px;color:#1c1c28;font-weight:normal;transform:scaleX(0.820);transform-origin:right center;">0.001</div>
<div class="" style="left:63px;top:517px;width:4px;height:1px;background:#2a2a2a"></div>
<div class="t" style="left:-239.5px;top:559.9px;width:300px;height:20px;line-height:20px;text-align:right;font-size:11.5px;color:#1c1c28;font-weight:normal;transform:scaleX(0.820);transform-origin:right center;">0.000</div>
<div class="" style="left:63px;top:569px;width:4px;height:1px;background:#2a2a2a"></div>
<div class="t" style="left:-239.5px;top:612px;width:300px;height:20px;line-height:20px;text-align:right;font-size:11.5px;color:#1c1c28;font-weight:normal;transform:scaleX(0.820);transform-origin:right center;">-0.001</div>
<div class="" style="left:63px;top:622px;width:4px;height:1px;background:#2a2a2a"></div>
<div class="" style="left:69px;top:623px;width:1px;height:5px;background:#222"></div>
<div class="t" style="left:-81.45px;top:625px;width:300px;height:20px;line-height:20px;text-align:center;font-size:11.5px;color:#1c1c28;font-weight:normal;transform:scaleX(0.820);transform-origin:center center;">0.0</div>
<div class="" style="left:106px;top:623px;width:1px;height:5px;background:#222"></div>
<div class="t" style="left:-44.28px;top:625px;width:300px;height:20px;line-height:20px;text-align:center;font-size:11.5px;color:#1c1c28;font-weight:normal;transform:scaleX(0.820);transform-origin:center center;">50.0</div>
<div class="" style="left:143px;top:623px;width:1px;height:5px;background:#222"></div>
<div class="t" style="left:-7.109999999999985px;top:625px;width:300px;height:20px;line-height:20px;text-align:center;font-size:11.5px;color:#1c1c28;font-weight:normal;transform:scaleX(0.820);transform-origin:center center;">100.0</div>
<div class="" style="left:180px;top:623px;width:1px;height:5px;background:#222"></div>
<div class="t" style="left:30.060000000000002px;top:625px;width:300px;height:20px;line-height:20px;text-align:center;font-size:11.5px;color:#1c1c28;font-weight:normal;transform:scaleX(0.820);transform-origin:center center;">150.0</div>
<div class="" style="left:218px;top:623px;width:1px;height:5px;background:#222"></div>
<div class="t" style="left:67.23000000000002px;top:625px;width:300px;height:20px;line-height:20px;text-align:center;font-size:11.5px;color:#1c1c28;font-weight:normal;transform:scaleX(0.820);transform-origin:center center;">200.0</div>
<div class="" style="left:255px;top:623px;width:1px;height:5px;background:#222"></div>
<div class="t" style="left:104.40000000000003px;top:625px;width:300px;height:20px;line-height:20px;text-align:center;font-size:11.5px;color:#1c1c28;font-weight:normal;transform:scaleX(0.820);transform-origin:center center;">250.0</div>
<div class="" style="left:292px;top:623px;width:1px;height:5px;background:#222"></div>
<div class="t" style="left:141.57px;top:625px;width:300px;height:20px;line-height:20px;text-align:center;font-size:11.5px;color:#1c1c28;font-weight:normal;transform:scaleX(0.820);transform-origin:center center;">300.0</div>
<div class="" style="left:329px;top:623px;width:1px;height:5px;background:#222"></div>
<div class="t" style="left:178.74px;top:625px;width:300px;height:20px;line-height:20px;text-align:center;font-size:11.5px;color:#1c1c28;font-weight:normal;transform:scaleX(0.820);transform-origin:center center;">350.0</div>
<div class="" style="left:366px;top:623px;width:1px;height:5px;background:#222"></div>
<div class="t" style="left:215.91000000000003px;top:625px;width:300px;height:20px;line-height:20px;text-align:center;font-size:11.5px;color:#1c1c28;font-weight:normal;transform:scaleX(0.820);transform-origin:center center;">400.0</div>
<div class="" style="left:403px;top:623px;width:1px;height:5px;background:#222"></div>
<div class="t" style="left:253.08000000000004px;top:625px;width:300px;height:20px;line-height:20px;text-align:center;font-size:11.5px;color:#1c1c28;font-weight:normal;transform:scaleX(0.820);transform-origin:center center;">450.0</div>
<div class="" style="left:441px;top:623px;width:1px;height:5px;background:#222"></div>
<div class="t" style="left:290.25000000000006px;top:625px;width:300px;height:20px;line-height:20px;text-align:center;font-size:11.5px;color:#1c1c28;font-weight:normal;transform:scaleX(0.820);transform-origin:center center;">500.0</div>
<div class="" style="left:478px;top:623px;width:1px;height:5px;background:#222"></div>
<div class="t" style="left:327.42px;top:625px;width:300px;height:20px;line-height:20px;text-align:center;font-size:11.5px;color:#1c1c28;font-weight:normal;transform:scaleX(0.820);transform-origin:center center;">550.0</div>
<div class="" style="left:515px;top:623px;width:1px;height:5px;background:#222"></div>
<div class="t" style="left:364.5899999999999px;top:625px;width:300px;height:20px;line-height:20px;text-align:center;font-size:11.5px;color:#1c1c28;font-weight:normal;transform:scaleX(0.820);transform-origin:center center;">600.0</div>
<div class="" style="left:552px;top:623px;width:1px;height:5px;background:#222"></div>
<div class="t" style="left:401.76px;top:625px;width:300px;height:20px;line-height:20px;text-align:center;font-size:11.5px;color:#1c1c28;font-weight:normal;transform:scaleX(0.820);transform-origin:center center;">650.0</div>
<div class="" style="left:554px;top:412px;width:5px;height:1px;background:#222"></div>
<div class="t" style="left:560px;top:402.5px;height:20px;line-height:20px;font-size:11.5px;color:#1c1c28;font-weight:normal;transform:scaleX(0.820);transform-origin:left center;">0.5</div>
<div class="" style="left:554px;top:442px;width:5px;height:1px;background:#222"></div>
<div class="t" style="left:560px;top:432.35px;height:20px;line-height:20px;font-size:11.5px;color:#1c1c28;font-weight:normal;transform:scaleX(0.820);transform-origin:left center;">0.4</div>
<div class="" style="left:554px;top:472px;width:5px;height:1px;background:#222"></div>
<div class="t" style="left:560px;top:462.2px;height:20px;line-height:20px;font-size:11.5px;color:#1c1c28;font-weight:normal;transform:scaleX(0.820);transform-origin:left center;">0.3</div>
<div class="" style="left:554px;top:502px;width:5px;height:1px;background:#222"></div>
<div class="t" style="left:560px;top:492.05px;height:20px;line-height:20px;font-size:11.5px;color:#1c1c28;font-weight:normal;transform:scaleX(0.820);transform-origin:left center;">0.2</div>
<div class="" style="left:554px;top:531px;width:5px;height:1px;background:#222"></div>
<div class="t" style="left:560px;top:521.9px;height:20px;line-height:20px;font-size:11.5px;color:#1c1c28;font-weight:normal;transform:scaleX(0.820);transform-origin:left center;">0.1</div>
<div class="" style="left:554px;top:561px;width:5px;height:1px;background:#222"></div>
<div class="t" style="left:560px;top:551.75px;height:20px;line-height:20px;font-size:11.5px;color:#1c1c28;font-weight:normal;transform:scaleX(0.820);transform-origin:left center;">0.0</div>
<div class="" style="left:554px;top:591px;width:5px;height:1px;background:#222"></div>
<div class="t" style="left:560px;top:581.6px;height:20px;line-height:20px;font-size:11.5px;color:#1c1c28;font-weight:normal;transform:scaleX(0.820);transform-origin:left center;">-0.1</div>
<div class="" style="left:554px;top:621px;width:5px;height:1px;background:#222"></div>
<div class="t" style="left:560px;top:611.45px;height:20px;line-height:20px;font-size:11.5px;color:#1c1c28;font-weight:normal;transform:scaleX(0.820);transform-origin:left center;">-0.2</div>
<div class="t" style="left:159px;top:640px;width:300px;height:20px;line-height:20px;text-align:center;font-size:11.5px;color:#1c1c28;font-weight:normal;transform:scaleX(0.895);transform-origin:center center;">Time</div>
<div class="t" style="left:-127.5px;top:507px;width:300px;height:20px;line-height:20px;text-align:center;font-size:11.5px;color:#3a2420;font-weight:normal;transform:rotate(-90deg) scaleX(0.943);transform-origin:center center;">Volts</div>
<div class="t" style="left:438.5px;top:505.5px;width:300px;height:20px;line-height:20px;text-align:center;font-size:11.5px;color:#3a2420;font-weight:normal;transform:rotate(90deg) scaleX(0.885);transform-origin:center center;">Ohms/Sec</div>
<svg width="920" height="666"><g fill="none"><path d="M194.1,412V622" stroke="#b4b4b4" stroke-width="1.5"/><path d="M217.9,412V622" stroke="#92921a" stroke-width="2"/><path d="M237.3,412V622" stroke="#c47c20" stroke-width="1.4"/><path d="M261,414V622" stroke="#3ea41c" stroke-width="1.8" stroke-dasharray="2.2,3.05"/><path d="M265.6,412V622" stroke="#5ce434" stroke-width="1.3"/><path d="M291.2,416.9V622" stroke="#3c8c14" stroke-width="2" stroke-dasharray="37.5,5.3"/><path d="M299.8,412V622" stroke="#c83cc8" stroke-width="1.6"/><path d="M435.4,413.9V622" stroke="#64dcdc" stroke-width="1.3" stroke-dasharray="3,2.27"/><path d="M468,412V622" stroke="#3c8c8c" stroke-width="2"/><path d="M552.6,412V622" stroke="#1c1c1c" stroke-width="1.3"/><path d="M552.6,416.5V622" stroke="#84f0f0" stroke-width="1.4" stroke-dasharray="16.3,5.2"/><path d="M69,568 L75,567.5 L82,566.5 L90,563.5 L96,562 L102,563 L110,565 L120,567.5 L130,570 L140,570.5 L150,570 L160,569.5 L170,568.5 L182,568 L190,569 L194.25,571.3 L197,568 L199,561 L201,550 L203,535 L205,518 L208,492 L211,471 L214,458 L216.5,452 L218,450.5 L219.5,452 L221.5,460 L224,477 L226,500 L228,525 L230,548 L232,563 L234,574 L236,580.5 L237.25,582.5 L239,581.5 L241,580 L243,578 L246,576.5 L250,576.8 L258,579 L265,580.5 L272,580 L280,579 L290,578 L300,577 L310,576 L320,575 L335,573 L350,571 L362,568.5 L372,566.3 L380,565.6 L388,565.5 L400,566.5 L410,568 L420,569.5 L430,571 L440,573.5 L450,577 L460,579.5 L468,580.5 L475,581.3 L482,580.8 L490,579.5 L500,578 L512,576.5 L525,575.2 L535,574.6 L552,574.5" stroke="#c80808" stroke-width="1" stroke-linejoin="round"/><path d="M69,574.5 L75,573.5 L82,571.5 L88,570.5 L95,570.5 L100,571.5 L108,572.5 L115,574 L123,575.5 L128,574.2 L132,573.6 L138,574.5 L143,575 L150,577.5 L160,580.5 L170,584.5 L178,588 L182,588.8 L190,588.8 L194,587.5 L197,584 L200,579 L205,570 L210,562 L214,557 L218,552 L222,547.5 L226,544 L230,539 L234,534.5 L237.5,530 L242,520 L246,512 L250,503 L254,496 L258,490 L262,485.5 L265.5,483 L269,481.5 L272,478.5 L276,472 L280,465 L285,453 L290,442.5 L293,438 L296,434.5 L299.75,432.75 L303,434.5 L306,437 L310,442.5 L315,452 L320,462.5 L330,484 L340,505 L350,525 L360,544 L367,555 L375,566 L380,570.5 L385,574 L392,578.5 L400,582 L408,587 L415,591 L425,596.5 L432,600 L436,601.8 L440,602.5 L446,604.5 L452,606.5 L458,609 L463,611.3 L468,612.5 L471,611.5 L475,608.5 L480,604 L485,599.5 L489,596.5 L494,595 L500,593.5 L506,592 L512,590 L517,587.5 L522,584 L527,579 L531,574.5 L535,569 L538,565 L542,562.5 L546,560.5 L550,559 L552,559" stroke="#0e32b4" stroke-width="1" stroke-linejoin="round"/></g><circle cx="194.3" cy="571.3" r="2.3" fill="#fff"/><circle cx="217.9" cy="450.5" r="2.3" fill="#ffe818"/><circle cx="237.3" cy="582.5" r="2.3" fill="#ffa818"/><circle cx="265.6" cy="483" r="2.3" fill="#68ee40"/><circle cx="299.8" cy="432.8" r="2.3" fill="#ff48ff"/><circle cx="468" cy="612.5" r="2.3" fill="#90ffff"/><path d="M524,522L606,611" stroke="#f01010" stroke-width="3"/><path d="M612,618L598.5,614.5L609.5,604.5z" fill="#f01010"/></svg>
<div class="t" style="left:35px;top:562px;width:300px;height:20px;line-height:20px;text-align:center;font-size:11.5px;color:#e8e8e8;font-weight:normal;transform:scaleX(0.850);transform-origin:center center;">Q</div>
<div class="t" style="left:59px;top:440.5px;width:300px;height:20px;line-height:20px;text-align:center;font-size:11.5px;color:#e8e020;font-weight:normal;transform:scaleX(0.850);transform-origin:center center;">R</div>
<div class="t" style="left:78px;top:572.5px;width:300px;height:20px;line-height:20px;text-align:center;font-size:11.5px;color:#e8a020;font-weight:normal;transform:scaleX(0.850);transform-origin:center center;">S</div>
<div class="t" style="left:107.5px;top:473px;width:300px;height:20px;line-height:20px;text-align:center;font-size:11.5px;color:#60e838;font-weight:normal;transform:scaleX(0.850);transform-origin:center center;">B</div>
<div class="t" style="left:141px;top:423px;width:300px;height:20px;line-height:20px;text-align:center;font-size:11.5px;color:#e848e8;font-weight:normal;transform:scaleX(0.850);transform-origin:center center;">Z</div>
<div class="t" style="left:309px;top:602.5px;width:300px;height:20px;line-height:20px;text-align:center;font-size:11.5px;color:#58c0c0;font-weight:normal;transform:scaleX(0.850);transform-origin:center center;">X</div>
<div class="" style="left:638px;top:111px;width:250.5px;height:170px;background:#000;border:solid;border-width:3px 3.4px 4.2px 3px;border-color:#505050 #7c7c7c #7c7c7c #505050"></div>
<svg width="920" height="300"><defs><linearGradient id="wg" gradientUnits="userSpaceOnUse" x1="740" y1="150" x2="763" y2="232"><stop offset="0" stop-color="#fff0ec"/><stop offset="0.17" stop-color="#ffc4c4"/><stop offset="0.34" stop-color="#ff6060"/><stop offset="0.47" stop-color="#fc0808"/><stop offset="0.58" stop-color="#c80000"/><stop offset="0.74" stop-color="#680000"/><stop offset="0.9" stop-color="#240000"/><stop offset="1" stop-color="#100000"/></linearGradient><linearGradient id="fg" x1="0" y1="0" x2="1" y2="0.4"><stop offset="0" stop-color="#1c0000"/><stop offset="0.35" stop-color="#4c0000"/><stop offset="0.6" stop-color="#300000"/><stop offset="1" stop-color="#440202"/></linearGradient><linearGradient id="sl" x1="0" y1="0" x2="0" y2="1"><stop offset="0" stop-color="#a08484"/><stop offset="0.5" stop-color="#846666"/><stop offset="1" stop-color="#5c4040"/></linearGradient></defs><path d="M677,231.5 L709,218 L713,218 L716,237.5 L700,234.5z" fill="#400000"/><path d="M772,223 L790,219.5 L804,217.8 L826,222 L851.5,227 L830,235 L798,245 L774,246.5 L760,241 L752,237.5 L772,238z" fill="url(#fg)"/><path d="M716.5,237.5 L752,236 L774,241 L774,246 L752,239 L720,243.5z" fill="#1c0000"/><path d="M713.5,238 L713.5,160.5 L714.5,161.2 L715.5,161.0 L716.5,159.8 L717.5,158.3 L718.5,160.2 L719.5,156.8 L720.5,158.2 L721.5,159.5 L722.5,158.2 L723.5,159.0 L724.5,157.8 L725.5,155.3 L726.5,156.1 L727.5,158.0 L728.5,156.8 L729.5,156.5 L730.5,155.7 L731.5,153.8 L732.5,156.8 L733.5,156.5 L734.5,153.1 L735.5,152.8 L736.5,154.2 L737.5,154.5 L738.5,154.2 L739.5,153.4 L740.5,153.8 L741.5,154.5 L742.5,151.1 L743.5,152.4 L744.5,152.8 L745.5,151.9 L746.5,152.2 L747.5,152.0 L748.5,152.8 L749.5,150.3 L750.5,148.9 L751.5,149.8 L752.5,142.1 L753.5,147.1 L754.5,150.1 L755.5,148.2 L756.5,146.4 L757.5,147.7 L758.5,145.9 L759.5,145.6 L760.5,147.0 L761.5,143.1 L762.5,142.9 L763.5,146.8 L764.5,145.4 L765.5,146.3 L766.5,146.1 L767.5,141.6 L768.5,143.4 L769.5,145.3 L770.5,143.9 L771.5,144.2 L772.3,222.5 L772.3,240 L752,237.5 L719.5,243 L716.5,238z" fill="url(#wg)"/><path d="M711.8,168 L714.2,160 L716.5,237 L708.2,235.5z" fill="url(#sl)"/><path d="M773.5,242h21l-1,3.5l-9,1.8h-11z" fill="#665e5e"/><path d="M677.5,231l3,-2.5 2,2z" fill="#908888"/><path d="M718,237.5l2,6 -1.5,1z" fill="#a09898"/><path d="M826,231l8,-2.5v2z" fill="#807070"/></svg>
<div class="" style="left:612.4px;top:287px;width:303.3px;height:47.5px;background:#686868;border:solid;border-width:3px 3.4px 3.6px 3px;border-color:#4c4c4c #7e7e7e #7e7e7e #4c4c4c"></div>
<div class="" style="left:669.5px;top:297px;width:27.3px;height:25px;background:#8c8c8c;border:1px solid;border-color:#a8a8a8 #585858 #585858 #a8a8a8"></div>
<div class="" style="left:701.6px;top:297px;width:27.3px;height:25px;background:#8c8c8c;border:1px solid;border-color:#a8a8a8 #585858 #585858 #a8a8a8"></div>
<div class="" style="left:733.6px;top:297px;width:27.3px;height:25px;background:#8c8c8c;border:1px solid;border-color:#a8a8a8 #585858 #585858 #a8a8a8"></div>
<div class="" style="left:765.5px;top:297px;width:27.3px;height:25px;background:#8c8c8c;border:1px solid;border-color:#a8a8a8 #585858 #585858 #a8a8a8"></div>
<div class="" style="left:797.4px;top:297px;width:27.3px;height:25px;background:#8c8c8c;border:1px solid;border-color:#a8a8a8 #585858 #585858 #a8a8a8"></div>
<div class="" style="left:829px;top:297px;width:27.3px;height:25px;background:#8c8c8c;border:1px solid;border-color:#a8a8a8 #585858 #585858 #a8a8a8"></div>
<svg width="920" height="340"><path d="M676.8,303.8v11.4l12.8,-5.7z" fill="#5cac38"/><rect x="709.5" y="303.5" width="4.5" height="12" fill="#a8a8a8" stroke="#3a3a3a" stroke-width="1"/><rect x="716.5" y="303.5" width="4.5" height="12" fill="#a8a8a8" stroke="#3a3a3a" stroke-width="1"/><rect x="740.5" y="303" width="13.5" height="13" fill="#b84050" stroke="#983040" stroke-width="0.6" stroke-dasharray="1,1"/><path d="M769.5,304v11.5l10,-5.7zM779.5,304v11.5l10,-5.7z" fill="#acacac"/><path d="M810,304v11.5l-10,-5.7zM820.5,304v11.5l-10,-5.7z" fill="#acacac"/><path d="M834.5,304v11.5l13,-5.7z" fill="#acacac"/><rect x="848.5" y="303.5" width="2.2" height="12" fill="#b0b0b0" stroke="#808080" stroke-width="0.5"/></svg>
<div class="" style="left:612.4px;top:335.5px;width:303.3px;height:50px;background:#686868;border:solid;border-width:3.5px 3.4px 4px 3px;border-color:#4c4c4c #7e7e7e #7e7e7e #4c4c4c"></div>
<div class="" style="left:620.3px;top:348px;width:289.5px;height:11px;background:#6c6c78;border-radius:0 5px 5px 0;border-top:1px solid #5a5a64;border-right:1px solid #b8b8c0"></div>
<div class="" style="left:620.3px;top:348px;width:9.3px;height:11px;background:#525254;border-left:1.5px solid #4868b4;border-top:1px solid #8a8a8a"></div>
<svg width="920" height="400"><g stroke="#363636" stroke-width="1"><path d="M625.5,363V367.4"/><path d="M630.5,363V365.6" stroke="#464646"/><path d="M634.5,363V365.6" stroke="#464646"/><path d="M639.5,363V365.6" stroke="#464646"/><path d="M643.5,363V365.6" stroke="#464646"/><path d="M648.5,363V367.4"/><path d="M653.5,363V365.6" stroke="#464646"/><path d="M657.5,363V365.6" stroke="#464646"/><path d="M662.5,363V365.6" stroke="#464646"/><path d="M667.5,363V365.6" stroke="#464646"/><path d="M671.5,363V367.4"/><path d="M676.5,363V365.6" stroke="#464646"/><path d="M681.5,363V365.6" stroke="#464646"/><path d="M685.5,363V365.6" stroke="#464646"/><path d="M690.5,363V365.6" stroke="#464646"/><path d="M694.5,363V367.4"/><path d="M699.5,363V365.6" stroke="#464646"/><path d="M704.5,363V365.6" stroke="#464646"/><path d="M708.5,363V365.6" stroke="#464646"/><path d="M713.5,363V365.6" stroke="#464646"/><path d="M718.5,363V367.4"/><path d="M722.5,363V365.6" stroke="#464646"/><path d="M727.5,363V365.6" stroke="#464646"/><path d="M732.5,363V365.6" stroke="#464646"/><path d="M736.5,363V365.6" stroke="#464646"/><path d="M741.5,363V367.4"/><path d="M746.5,363V365.6" stroke="#464646"/><path d="M750.5,363V365.6" stroke="#464646"/><path d="M755.5,363V365.6" stroke="#464646"/><path d="M759.5,363V365.6" stroke="#464646"/><path d="M764.5,363V367.4"/><path d="M769.5,363V365.6" stroke="#464646"/><path d="M773.5,363V365.6" stroke="#464646"/><path d="M778.5,363V365.6" stroke="#464646"/><path d="M783.5,363V365.6" stroke="#464646"/><path d="M787.5,363V367.4"/><path d="M792.5,363V365.6" stroke="#464646"/><path d="M797.5,363V365.6" stroke="#464646"/><path d="M801.5,363V365.6" stroke="#464646"/><path d="M806.5,363V365.6" stroke="#464646"/><path d="M810.5,363V367.4"/><path d="M815.5,363V365.6" stroke="#464646"/><path d="M820.5,363V365.6" stroke="#464646"/><path d="M824.5,363V365.6" stroke="#464646"/><path d="M829.5,363V365.6" stroke="#464646"/><path d="M834.5,363V367.4"/><path d="M838.5,363V365.6" stroke="#464646"/><path d="M843.5,363V365.6" stroke="#464646"/><path d="M848.5,363V365.6" stroke="#464646"/><path d="M852.5,363V365.6" stroke="#464646"/><path d="M857.5,363V367.4"/><path d="M862.5,363V365.6" stroke="#464646"/><path d="M866.5,363V365.6" stroke="#464646"/><path d="M871.5,363V365.6" stroke="#464646"/><path d="M875.5,363V365.6" stroke="#464646"/><path d="M880.5,363V367.4"/><path d="M885.5,363V365.6" stroke="#464646"/><path d="M889.5,363V365.6" stroke="#464646"/><path d="M894.5,363V365.6" stroke="#464646"/><path d="M899.5,363V365.6" stroke="#464646"/><path d="M903.5,363V367.4"/></g></svg>
<div class="t" style="left:474.9px;top:363.2px;width:300px;height:20px;line-height:20px;text-align:center;font-size:8.7px;color:#464646;font-weight:normal;transform:scaleX(0.880);transform-origin:center center;">0</div>
<div class="t" style="left:498.1px;top:363.2px;width:300px;height:20px;line-height:20px;text-align:center;font-size:8.7px;color:#464646;font-weight:normal;transform:scaleX(0.880);transform-origin:center center;">5</div>
<div class="t" style="left:520.9px;top:363.2px;width:300px;height:20px;line-height:20px;text-align:center;font-size:8.7px;color:#464646;font-weight:normal;transform:scaleX(0.880);transform-origin:center center;">10</div>
<div class="t" style="left:544.1px;top:363.2px;width:300px;height:20px;line-height:20px;text-align:center;font-size:8.7px;color:#464646;font-weight:normal;transform:scaleX(0.880);transform-origin:center center;">15</div>
<div class="t" style="left:567.3px;top:363.2px;width:300px;height:20px;line-height:20px;text-align:center;font-size:8.7px;color:#464646;font-weight:normal;transform:scaleX(0.880);transform-origin:center center;">20</div>
<div class="t" style="left:590.5px;top:363.2px;width:300px;height:20px;line-height:20px;text-align:center;font-size:8.7px;color:#464646;font-weight:normal;transform:scaleX(0.880);transform-origin:center center;">25</div>
<div class="t" style="left:613.6999999999999px;top:363.2px;width:300px;height:20px;line-height:20px;text-align:center;font-size:8.7px;color:#464646;font-weight:normal;transform:scaleX(0.880);transform-origin:center center;">30</div>
<div class="t" style="left:636.9px;top:363.2px;width:300px;height:20px;line-height:20px;text-align:center;font-size:8.7px;color:#464646;font-weight:normal;transform:scaleX(0.880);transform-origin:center center;">35</div>
<div class="t" style="left:660.1px;top:363.2px;width:300px;height:20px;line-height:20px;text-align:center;font-size:8.7px;color:#464646;font-weight:normal;transform:scaleX(0.880);transform-origin:center center;">40</div>
<div class="t" style="left:683.3px;top:363.2px;width:300px;height:20px;line-height:20px;text-align:center;font-size:8.7px;color:#464646;font-weight:normal;transform:scaleX(0.880);transform-origin:center center;">45</div>
<div class="t" style="left:706.5px;top:363.2px;width:300px;height:20px;line-height:20px;text-align:center;font-size:8.7px;color:#464646;font-weight:normal;transform:scaleX(0.880);transform-origin:center center;">50</div>
<div class="t" style="left:729.6999999999999px;top:363.2px;width:300px;height:20px;line-height:20px;text-align:center;font-size:8.7px;color:#464646;font-weight:normal;transform:scaleX(0.880);transform-origin:center center;">55</div>
<div class="t" style="left:752.9px;top:363.2px;width:300px;height:20px;line-height:20px;text-align:center;font-size:8.7px;color:#464646;font-weight:normal;transform:scaleX(0.880);transform-origin:center center;">60</div>
<div class="" style="left:612.4px;top:389.5px;width:303.3px;height:114.5px;background:#686868;border:solid;border-width:3.5px 3.4px 4px 3px;border-color:#4c4c4c #7e7e7e #7e7e7e #4c4c4c"></div>
<div class="t" style="left:508.5px;top:388.8px;width:300px;height:20px;line-height:20px;text-align:center;font-size:10.5px;color:#30ec70;font-weight:normal;transform:scaleX(0.930);transform-origin:center center;">LVET</div>
<div class="" style="left:635.0px;top:406.6px;width:47px;height:20px;background:#000;border:3px solid;border-color:#484848 #848484 #848484 #484848"></div>
<div class="t" style="left:508.5px;top:407.20000000000005px;width:300px;height:20px;line-height:20px;text-align:center;font-size:10.5px;color:#30ec70;font-weight:normal;transform:scaleX(0.910);transform-origin:center center;">272.00</div>
<div class="t" style="left:579px;top:388.8px;width:300px;height:20px;line-height:20px;text-align:center;font-size:10.5px;color:#30ec70;font-weight:normal;transform:scaleX(0.790);transform-origin:center center;">PEP</div>
<div class="" style="left:705.5px;top:406.6px;width:47px;height:20px;background:#000;border:3px solid;border-color:#484848 #848484 #848484 #484848"></div>
<div class="t" style="left:579px;top:407.20000000000005px;width:300px;height:20px;line-height:20px;text-align:center;font-size:10.5px;color:#30ec70;font-weight:normal;transform:scaleX(0.910);transform-origin:center center;">96.00</div>
<div class="t" style="left:649px;top:388.8px;width:300px;height:20px;line-height:20px;text-align:center;font-size:10.5px;color:#30ec70;font-weight:normal;transform:scaleX(0.930);transform-origin:center center;">SV</div>
<div class="" style="left:775.5px;top:406.6px;width:47px;height:20px;background:#000;border:3px solid;border-color:#484848 #848484 #848484 #484848"></div>
<div class="t" style="left:649px;top:407.20000000000005px;width:300px;height:20px;line-height:20px;text-align:center;font-size:10.5px;color:#30ec70;font-weight:normal;transform:scaleX(0.910);transform-origin:center center;">400.97</div>
<div class="t" style="left:719.5px;top:387.8px;width:300px;height:20px;line-height:20px;text-align:center;font-size:10.5px;color:#30ec70;font-weight:normal;transform:scaleX(0.930);transform-origin:center center;">CO</div>
<div class="" style="left:846.0px;top:406.6px;width:47px;height:20px;background:#000;border:3px solid;border-color:#484848 #848484 #848484 #484848"></div>
<div class="t" style="left:719.5px;top:407.20000000000005px;width:300px;height:20px;line-height:20px;text-align:center;font-size:10.5px;color:#30ec70;font-weight:normal;transform:scaleX(0.910);transform-origin:center center;">25.35</div>
<div class="t" style="left:506px;top:423.0px;width:300px;height:20px;line-height:20px;text-align:center;font-size:10.5px;color:#30ec70;font-weight:normal;transform:scaleX(0.930);transform-origin:center center;">Zo</div>
<div class="" style="left:635.0px;top:440px;width:47px;height:20px;background:#000;border:3px solid;border-color:#484848 #848484 #848484 #484848"></div>
<div class="t" style="left:508.5px;top:440.6px;width:300px;height:20px;line-height:20px;text-align:center;font-size:10.5px;color:#30ec70;font-weight:normal;transform:scaleX(0.910);transform-origin:center center;">4.97</div>
<div class="t" style="left:578px;top:422.8px;width:300px;height:20px;line-height:20px;text-align:center;font-size:10.5px;color:#30ec70;font-weight:normal;transform:scaleX(0.930);transform-origin:center center;">HR</div>
<div class="" style="left:705.5px;top:440px;width:47px;height:20px;background:#000;border:3px solid;border-color:#484848 #848484 #848484 #484848"></div>
<div class="t" style="left:579px;top:440.6px;width:300px;height:20px;line-height:20px;text-align:center;font-size:10.5px;color:#30ec70;font-weight:normal;transform:scaleX(0.910);transform-origin:center center;">63.22</div>
<div class="t" style="left:650px;top:423.3px;width:300px;height:20px;line-height:20px;text-align:center;font-size:10.5px;color:#30ec70;font-weight:normal;transform:scaleX(0.930);transform-origin:center center;">dZ/dt Max</div>
<div class="" style="left:775.5px;top:441px;width:47px;height:20px;background:#000;border:3px solid;border-color:#484848 #848484 #848484 #484848"></div>
<div class="t" style="left:649px;top:441.6px;width:300px;height:20px;line-height:20px;text-align:center;font-size:10.5px;color:#30ec70;font-weight:normal;transform:scaleX(0.910);transform-origin:center center;">0.43</div>
<div class="t" style="left:720.3px;top:421.8px;width:300px;height:20px;line-height:20px;text-align:center;font-size:10.5px;color:#30ec70;font-weight:normal;transform:scaleX(0.833);transform-origin:center center;">Mean IBI</div>
<div class="" style="left:846.0px;top:440px;width:47px;height:20px;background:#000;border:3px solid;border-color:#484848 #848484 #848484 #484848"></div>
<div class="t" style="left:719.5px;top:440.6px;width:300px;height:20px;line-height:20px;text-align:center;font-size:10.5px;color:#30ec70;font-weight:normal;transform:scaleX(0.910);transform-origin:center center;">949.13</div>
<div class="t" style="left:543px;top:458.0px;width:300px;height:20px;line-height:20px;text-align:center;font-size:10.5px;color:#4ea060;font-weight:normal;transform:scaleX(0.930);transform-origin:center center;">MAP</div>
<div class="" style="left:669.5px;top:475px;width:47px;height:20px;background:#464646;border:3px solid;border-color:#484848 #848484 #848484 #484848"></div>
<div class="t" style="left:543px;top:475.6px;width:300px;height:20px;line-height:20px;text-align:center;font-size:10.5px;color:#4ea060;font-weight:normal;transform:scaleX(0.910);transform-origin:center center;">0.00</div>
<div class="t" style="left:613.5px;top:458.0px;width:300px;height:20px;line-height:20px;text-align:center;font-size:10.5px;color:#4ea060;font-weight:normal;transform:scaleX(0.930);transform-origin:center center;">TPR</div>
<div class="" style="left:740.0px;top:475px;width:47px;height:20px;background:#464646;border:3px solid;border-color:#484848 #848484 #848484 #484848"></div>
<div class="t" style="left:613.5px;top:475.6px;width:300px;height:20px;line-height:20px;text-align:center;font-size:10.5px;color:#4ea060;font-weight:normal;transform:scaleX(0.910);transform-origin:center center;">0.00</div>
<div class="t" style="left:683.6px;top:458.0px;width:300px;height:20px;line-height:20px;text-align:center;font-size:10.5px;color:#30ec70;font-weight:normal;transform:scaleX(0.873);transform-origin:center center;"># R Peaks</div>
<div class="" style="left:809.5px;top:475px;width:47px;height:20px;background:#000;border:3px solid;border-color:#484848 #848484 #848484 #484848"></div>
<div class="t" style="left:683px;top:475.6px;width:300px;height:20px;line-height:20px;text-align:center;font-size:10.5px;color:#30ec70;font-weight:normal;transform:scaleX(0.910);transform-origin:center center;">63</div>
<div class="" style="left:612.4px;top:505px;width:303.3px;height:111px;background:#000;border:solid;border-width:4px 3.4px 3px 3px;border-color:#4c4c4c #848484 #848484 #4c4c4c"></div>
<div class="" style="left:615.5px;top:509px;width:91.2px;height:15px;background:linear-gradient(90deg,#3c3c3c 0,#5a5a5a 2.5px,#707070 6px,#6c6c6c 50%,#6a6a6a calc(100% - 7px),#525252 calc(100% - 2.5px),#404040 100%);border-top:1px solid #858585;border-bottom:1px solid #484848"></div>
<div class="" style="left:706.7px;top:509px;width:103px;height:15px;background:linear-gradient(90deg,#3c3c3c 0,#5a5a5a 2.5px,#707070 6px,#6c6c6c 50%,#6a6a6a calc(100% - 7px),#525252 calc(100% - 2.5px),#404040 100%);border-top:1px solid #858585;border-bottom:1px solid #484848"></div>
<div class="" style="left:809.7px;top:509px;width:87px;height:15px;background:linear-gradient(90deg,#3c3c3c 0,#5a5a5a 2.5px,#707070 6px,#6c6c6c 50%,#6a6a6a calc(100% - 7px),#525252 calc(100% - 2.5px),#404040 100%);border-top:1px solid #858585;border-bottom:1px solid #484848"></div>
<div class="t" style="left:510px;top:505.6px;width:300px;height:20px;line-height:20px;text-align:center;font-size:11.5px;color:#ececec;font-weight:normal;transform:scaleX(0.950);transform-origin:center center;">Point</div>
<div class="t" style="left:607.5px;top:505.6px;width:300px;height:20px;line-height:20px;text-align:center;font-size:11.5px;color:#ececec;font-weight:normal;transform:scaleX(0.950);transform-origin:center center;">Location</div>
<div class="t" style="left:702.3px;top:505.6px;width:300px;height:20px;line-height:20px;text-align:center;font-size:11.5px;color:#ececec;font-weight:normal;transform:scaleX(0.940);transform-origin:center center;">Amplitude</div>
<div style="left:615.5px;top:524px;width:280.5px;height:89px;overflow:hidden;background:#000"><div style="left:0;top:0px;width:281px;height:1px;background:#787878"></div><div style="left:0;top:16px;width:281px;height:1px;background:#787878"></div><div style="left:0;top:32px;width:281px;height:1px;background:#787878"></div><div style="left:0;top:48px;width:281px;height:1px;background:#787878"></div><div style="left:0;top:64px;width:281px;height:1px;background:#787878"></div><div style="left:0;top:80px;width:281px;height:1px;background:#787878"></div><div style="left:90.5px;top:0;width:1px;height:89px;background:#787878"></div><div style="left:193.5px;top:0;width:1px;height:89px;background:#787878"></div><div class="t" style="left:0;top:-2.5px;width:91px;height:20px;line-height:20px;text-align:center;font-size:11.5px;color:#ffffff;transform:scaleX(0.95)">Q</div><div class="t" style="left:91px;top:-2.5px;width:102px;height:20px;line-height:20px;text-align:center;font-size:11.5px;color:#ffffff;transform:scaleX(0.93)">168</div><div class="t" style="left:192.7px;top:-2.5px;width:87px;height:20px;line-height:20px;text-align:center;font-size:11.5px;color:#ffffff;transform:scaleX(0.96)">-0.000045</div><div class="t" style="left:0;top:13.4px;width:91px;height:20px;line-height:20px;text-align:center;font-size:11.5px;color:#e4e428;transform:scaleX(0.95)">R</div><div class="t" style="left:91px;top:13.4px;width:102px;height:20px;line-height:20px;text-align:center;font-size:11.5px;color:#e4e428;transform:scaleX(0.93)">200</div><div class="t" style="left:192.7px;top:13.4px;width:87px;height:20px;line-height:20px;text-align:center;font-size:11.5px;color:#e4e428;transform:scaleX(0.96)">0.002273</div><div class="t" style="left:0;top:29.4px;width:91px;height:20px;line-height:20px;text-align:center;font-size:11.5px;color:#f09428;transform:scaleX(0.95)">S</div><div class="t" style="left:91px;top:29.4px;width:102px;height:20px;line-height:20px;text-align:center;font-size:11.5px;color:#f09428;transform:scaleX(0.93)">226</div><div class="t" style="left:192.7px;top:29.4px;width:87px;height:20px;line-height:20px;text-align:center;font-size:11.5px;color:#f09428;transform:scaleX(0.96)">-0.000251</div><div class="t" style="left:0;top:45.3px;width:91px;height:20px;line-height:20px;text-align:center;font-size:11.5px;color:#48ec28;transform:scaleX(0.95)">B</div><div class="t" style="left:91px;top:45.3px;width:102px;height:20px;line-height:20px;text-align:center;font-size:11.5px;color:#48ec28;transform:scaleX(0.93)">264</div><div class="t" style="left:192.7px;top:45.3px;width:87px;height:20px;line-height:20px;text-align:center;font-size:11.5px;color:#48ec28;transform:scaleX(0.96)">0.263484</div><div class="t" style="left:0;top:61.3px;width:91px;height:20px;line-height:20px;text-align:center;font-size:11.5px;color:#ec40ec;transform:scaleX(0.95)">Z</div><div class="t" style="left:91px;top:61.3px;width:102px;height:20px;line-height:20px;text-align:center;font-size:11.5px;color:#ec40ec;transform:scaleX(0.93)">310</div><div class="t" style="left:192.7px;top:61.3px;width:87px;height:20px;line-height:20px;text-align:center;font-size:11.5px;color:#ec40ec;transform:scaleX(0.96)">0.430849</div><div class="t" style="left:0;top:77.2px;width:91px;height:20px;line-height:20px;text-align:center;font-size:11.5px;color:#58d0e0;transform:scaleX(0.95)">X</div><div class="t" style="left:91px;top:77.2px;width:102px;height:20px;line-height:20px;text-align:center;font-size:11.5px;color:#58d0e0;transform:scaleX(0.93)">536</div><div class="t" style="left:192.7px;top:77.2px;width:87px;height:20px;line-height:20px;text-align:center;font-size:11.5px;color:#58d0e0;transform:scaleX(0.96)">-0.171498</div></div>
<div class="" style="left:897.3px;top:509px;width:14.5px;height:104px;background:linear-gradient(90deg,#464646,#6e6e6e 50%,#484848)"></div>
<div class="" style="left:897.3px;top:509px;width:14.5px;height:15px;background:#6c6c6c;border:1px solid;border-color:#9a9a9a #444 #444 #9a9a9a"></div>
<div class="" style="left:897.3px;top:586px;width:14.5px;height:12.5px;background:#6e6e6e;border:1px solid;border-color:#5c5c5c #c4c4c4 #c4c4c4 #5c5c5c"></div>
<div class="" style="left:897.5px;top:600px;width:14.5px;height:12px;background:#6c6c6c;border:1px solid;border-color:#9a9a9a #444 #444 #9a9a9a"></div>
<svg width="920" height="666"><path d="M902.5,519h5l-2.5,-4z" fill="#8a8a8a"/><path d="M902.5,604.5h5l-2.5,4z" fill="#8a8a8a"/></svg>
<div class="" style="left:611px;top:619.2px;width:305px;height:41.6px;background:#6b6b6b;border:2px solid #c01010"></div>
<div class="" style="left:613px;top:621.2px;width:301px;height:37.6px;border:2px solid;border-color:#505050 #848484 #848484 #505050"></div>
<div class="" style="left:626px;top:630px;width:21px;height:20.5px;background:#2cf4fc;border:3px solid;border-color:#4c4c4c #868686 #868686 #4c4c4c"></div>
<div class="t" style="left:649.5px;top:630.6px;height:20px;line-height:20px;font-size:11.5px;color:#181818;font-weight:normal;-webkit-text-stroke:0.25px #181818;transform:scaleX(0.839);transform-origin:left center;">100.0% - 63</div>
<div class="" style="left:739px;top:630px;width:21px;height:20.5px;background:#f8a80c;border:3px solid;border-color:#4c4c4c #868686 #868686 #4c4c4c"></div>
<div class="t" style="left:762px;top:630.6px;height:20px;line-height:20px;font-size:11.5px;color:#181818;font-weight:normal;-webkit-text-stroke:0.25px #181818;transform:scaleX(0.864);transform-origin:left center;">0.0% - 0</div>
<div class="" style="left:843.5px;top:630px;width:21px;height:20.5px;background:#fcf458;border:3px solid;border-color:#4c4c4c #868686 #868686 #4c4c4c"></div>
<div class="t" style="left:866.5px;top:630.6px;height:20px;line-height:20px;font-size:11.5px;color:#181818;font-weight:normal;-webkit-text-stroke:0.25px #181818;transform:scaleX(0.864);transform-origin:left center;">0.0% - 0</div>
<div class="" style="left:0px;top:0px;width:920px;height:1px;background:#3464c0"></div>
<div class="" style="left:0px;top:0px;width:1.3px;height:666px;background:#3464c0"></div>
<div class="" style="left:918.5px;top:0px;width:1.5px;height:666px;background:#3464c0"></div>
</body></html>
